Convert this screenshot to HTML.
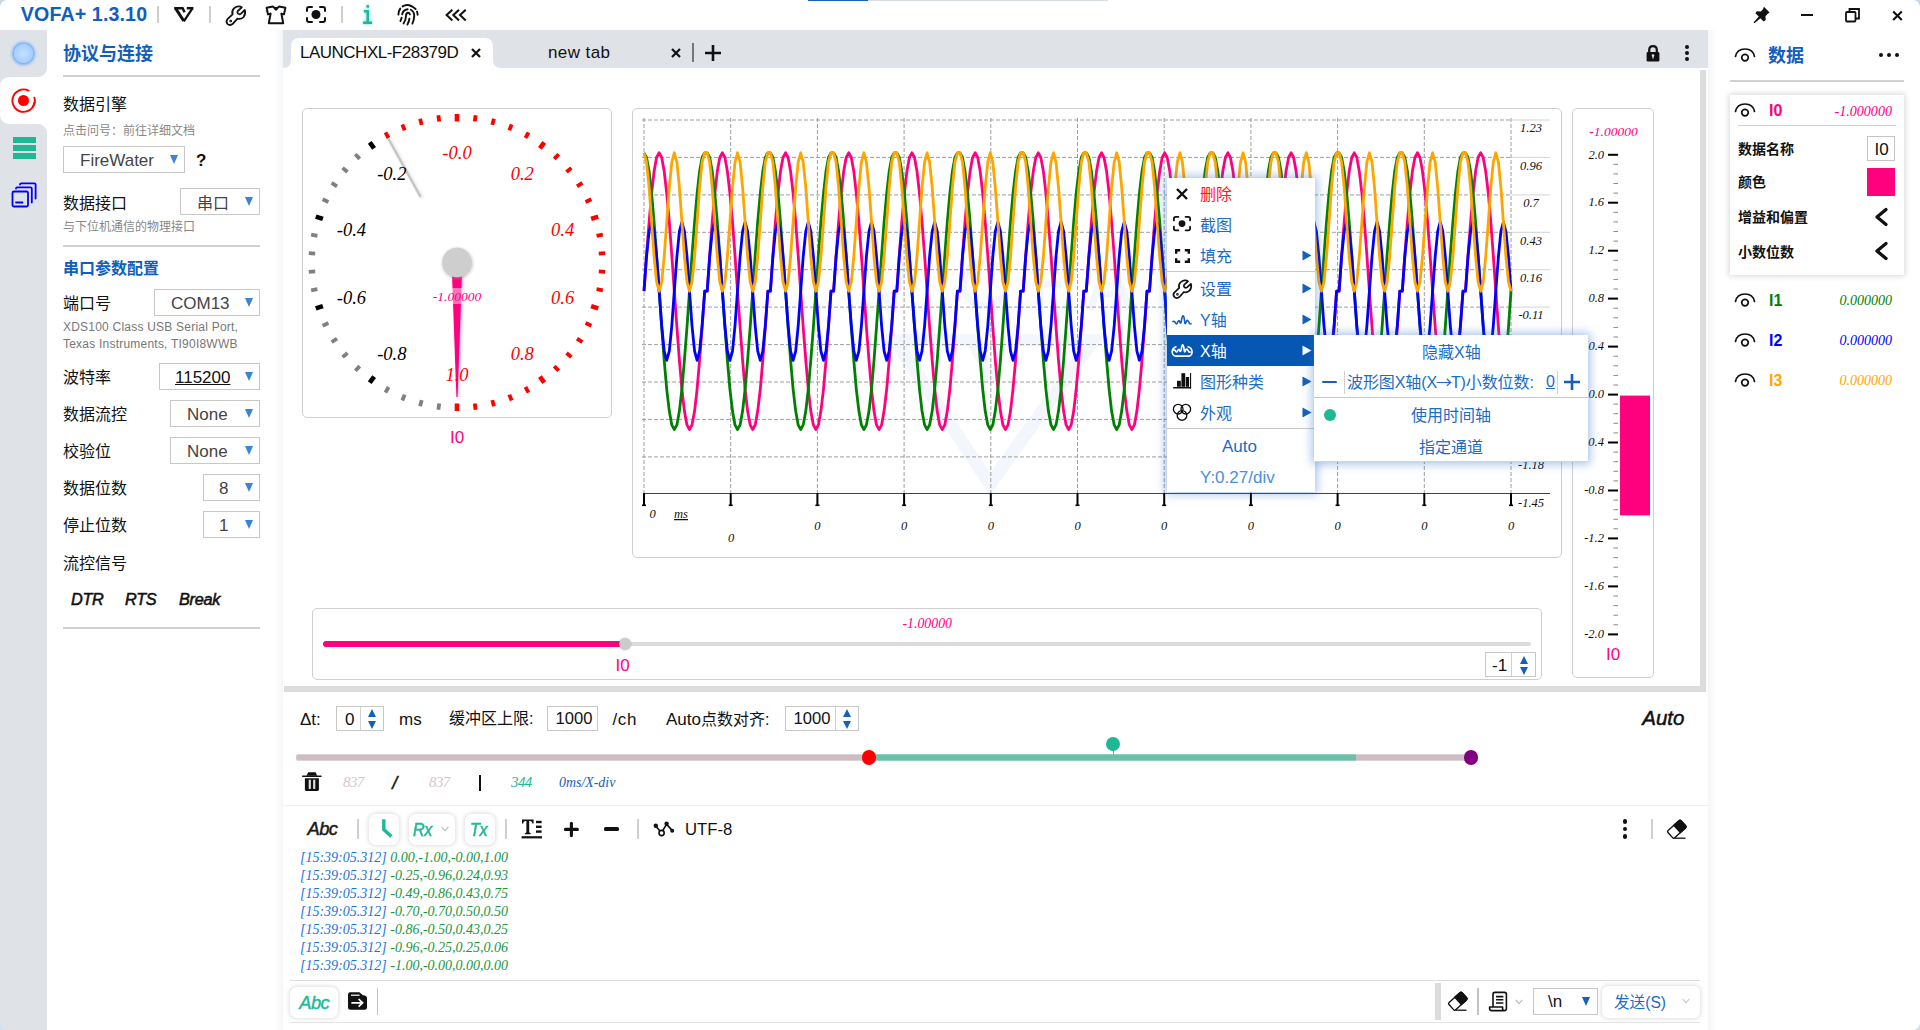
<!DOCTYPE html>
<html lang="zh"><head><meta charset="utf-8"><title>VOFA+ 1.3.10</title>
<style>
html,body{margin:0;padding:0}
body{width:1920px;height:1030px;position:relative;overflow:hidden;background:#fff;font-family:"Liberation Sans","Noto Sans CJK SC",sans-serif;color:#111;font-size:16px}
.a{position:absolute}
.t{position:absolute;white-space:nowrap;line-height:1}
.cj{font-family:"Liberation Sans","Noto Sans CJK SC",sans-serif;margin-top:.118em}
.se{font-family:"Liberation Serif",serif;font-style:italic}
.b{font-weight:bold}
.blue{color:#115ebc}
.sep{position:absolute;width:2px;background:#cfcfcf}
.cb{position:absolute;box-sizing:border-box;border:1px solid #c8c8c8;background:#fff}
.cb .v{position:absolute;white-space:nowrap;line-height:1;color:#444}
.cb .ar{position:absolute;right:6px;top:8px;width:0;height:0;border-left:4.5px solid transparent;border-right:4.5px solid transparent;border-top:9px solid #3a84d8}
.lab{position:absolute;white-space:nowrap;line-height:1;font-size:16px;color:#111;font-family:"Liberation Sans","Noto Sans CJK SC",sans-serif;margin-top:.118em}
.sub{position:absolute;white-space:nowrap;line-height:1;font-size:12px;color:#888;font-family:"Liberation Sans","Noto Sans CJK SC",sans-serif}
.box{position:absolute;box-sizing:border-box;border:1px solid #cfcfcf;border-radius:5px;background:#fff}
svg{position:absolute;overflow:visible}
</style></head><body>
<!-- ===== title bar ===== -->
<div class="a" style="left:0;top:0;width:1920px;height:30px;background:#fff"></div>
<div class="t b blue" style="left:20.8px;top:5px;font-size:19.6px;letter-spacing:0.14px">VOFA+ 1.3.10</div>
<div class="sep" style="left:157px;top:6px;height:17px"></div>
<svg style="left:174px;top:6px" width="20" height="18" viewBox="0 0 20 18" fill="none" stroke="#111" stroke-width="2.5" stroke-linejoin="miter"><path d="M0.2 2.2 H8.6 L10.6 6.2"/><path d="M12.8 2.2 H19.4"/><path d="M1.6 2.4 L9.8 15"  stroke-width="3"/><path d="M9.8 15.4 L18.4 2.4" stroke-width="2.3"/></svg>
<div class="sep" style="left:209px;top:6px;height:17px"></div>
<svg style="left:225px;top:5px" width="22" height="22" viewBox="0 0 22 22" fill="none" stroke="#111" stroke-width="1.8" stroke-linecap="round" stroke-linejoin="round"><path d="M13.2 1.4 Q15.6 1.2 16.8 2.4 L12.8 6 Q11.8 7.4 13 8.6 Q14.6 9.8 16 8.6 L19.8 5 Q21 8.6 18.6 12 Q16 14.8 12.4 13.6 L7.8 18.8 Q5 21.2 2.4 18.8 Q0.6 16.4 2.4 14.2 L7.6 9.4 Q6.4 6 9 3.4 Q10.8 1.6 13.2 1.4 Z"/><circle cx="5.7" cy="16.1" r="0.5"/></svg>
<svg style="left:265px;top:5px" width="22" height="20" viewBox="0 0 22 20" fill="none" stroke="#111" stroke-width="2" stroke-linejoin="round"><path d="M1.6 2.8 L8 1.6 Q11 4.8 14 1.6 L20.4 2.8 L19 9.4 L16.4 8.6 L18.2 18.2 H3.8 L5.6 8.6 L3 9.4 Z"/><path d="M8.2 2 Q11 9.6 13.8 2 Z" fill="#111" stroke="none"/></svg>
<svg style="left:305px;top:5px" width="22" height="20" viewBox="0 0 22 20" fill="none" stroke="#111" stroke-width="2" stroke-linecap="round" stroke-linejoin="round"><path d="M2 6 V4 Q2 2 4 2 H7 M15 2 H18 Q20 2 20 4 V6 M20 13 V15 Q20 17 18 17 H15 M7 17 H4 Q2 17 2 15 V13"/><circle cx="11" cy="9.5" r="4.5" fill="#111" stroke="none"/></svg>
<div class="sep" style="left:341px;top:6px;height:17px"></div>
<div class="t b" style="left:361.5px;top:5px;font-family:'Liberation Mono',monospace;font-size:25px;transform:scaleX(.72);transform-origin:0 0;color:#1abc9c;text-shadow:0 0 4px rgba(26,188,156,.7)">i</div>
<svg style="left:397px;top:3px" width="22" height="23" viewBox="0 0 22 23" fill="none" stroke="#111" stroke-width="1.9" stroke-linecap="round"><path d="M5.6 3.4 Q11.5 -0.4 18.6 6"/><path d="M3.2 5.6 Q1.6 8 1.4 11.6"/><path d="M20 8.6 Q20.6 10 20.6 11.8"/><path d="M5.2 11.4 Q5.6 7 10.6 6.2"/><path d="M13.8 6.8 Q17.6 9 17.2 13.4 Q17 17 15.4 20.6"/><path d="M12.9 11.4 Q12.4 9.6 10.8 9.8 Q9 10.2 9 13 Q8.8 17.6 6.6 20.4"/><path d="M4.6 14.8 Q4.2 16.6 3.4 18"/><path d="M12.4 15.6 Q12 19 10.4 21.6"/></svg>
<svg style="left:445px;top:9px" width="22" height="12" viewBox="0 0 22 12" fill="none" stroke="#111" stroke-width="2" stroke-linecap="square" stroke-linejoin="miter"><path d="M6.6 1.4 L1.6 6.1 L6.6 10.8 M13.3 1.4 L8.3 6.1 L13.3 10.8 M20 1.4 L15 6.1 L20 10.8"/></svg>
<!-- blue tiny bar at top -->
<div class="a" style="left:808px;top:0;width:60px;height:1px;background:#1560bd"></div>
<div class="a" style="left:868px;top:0;width:240px;height:1px;background:#d8dde4"></div>
<!-- window controls -->
<svg style="left:1753px;top:6px" width="18" height="18" viewBox="0 0 18 18"><path d="M10.9 0.8 L16.6 6.6 L14.8 7.8 L12.4 10.2 L12.8 14 L10.6 15.4 L7.4 12.2 L1.4 17.2 L0.5 16.4 L5.8 10.6 L2.4 7.2 L3.8 5.2 L7.8 5.6 L10 3.2 Z" fill="#111"/></svg>
<div class="a" style="left:1801px;top:14px;width:12px;height:2px;background:#111"></div>
<svg style="left:1845px;top:8px" width="15" height="15" viewBox="0 0 15 15" fill="none" stroke="#111" stroke-width="1.8"><rect x="1" y="4" width="9.5" height="9.5" rx="1"/><path d="M4.5 4 V1 H14 V10.5 H10.5"/></svg>
<svg style="left:1892px;top:9.5px" width="11" height="11" viewBox="0 0 11 11" stroke="#111" stroke-width="2.1"><path d="M1.2 1.4 L9.8 10 M9.8 1.4 L1.2 10"/></svg>
<!-- ===== left strip ===== -->
<div class="a" style="left:0;top:30px;width:47px;height:1000px;background:#fff"></div>
<div class="a" style="left:0;top:70px;width:12px;height:62px;background:#dfe3e8"></div>
<div class="a" style="left:0;top:30px;width:47px;height:47px;background:#dfe3e8;border-bottom-right-radius:9px"></div>
<div class="a" style="left:0;top:77px;width:47px;height:47px;background:#fff;border-radius:9px 0 0 9px"></div>
<div class="a" style="left:0;top:124px;width:47px;height:906px;background:#dfe3e8;border-top-right-radius:9px"></div>
<div class="a" style="left:14px;top:43.5px;width:19px;height:19px;border-radius:50%;background:radial-gradient(circle,#c6e0ff 0%,#a9d0ff 60%,#93c4ff 100%);box-shadow:0 0 3.5px 1.5px #4f9fff"></div>
<svg style="left:10px;top:87px" width="28" height="28" viewBox="0 0 28 28" fill="none" stroke="#ff0000" stroke-width="1.9" stroke-linecap="round"><circle cx="13.5" cy="13.5" r="5.5" fill="#ff0000" stroke="none"/><path d="M18.6 3.6 A11.2 11.2 0 1 0 24.4 10.6"/><path d="M24.6 15.2 A11.2 11.2 0 0 1 22.6 20"/></svg>
<div class="a" style="left:13px;top:137px;width:22.5px;height:6px;background:#1fb894"></div>
<div class="a" style="left:13px;top:145px;width:22.5px;height:6px;background:#1fb894"></div>
<div class="a" style="left:13px;top:153px;width:22.5px;height:6px;background:#1fb894"></div>
<svg style="left:11px;top:182px" width="26" height="26" viewBox="0 0 26 26" fill="none" stroke="#0000ff" stroke-width="1.8" stroke-linejoin="round" stroke-linecap="round"><rect x="1.5" y="9.5" width="15.5" height="15" rx="1.5"/><path d="M5 20.5 H11.5"/><path d="M5 6.6 Q5 5.4 6.2 5.4 H19.6 Q20.8 5.4 20.8 6.6 V20.6"/><path d="M9 2.6 Q9 1.4 10.2 1.4 H23.4 Q24.6 1.4 24.6 2.6 V16.6"/></svg>
<!-- ===== left panel ===== -->
<div class="a" style="left:275px;top:30px;width:8px;height:1000px;background:linear-gradient(90deg,#fff,#f9fafb 60%,#f4f5f7)"></div>
<div class="t cj b blue" style="left:63px;top:43px;font-size:18px">协议与连接</div>
<div class="a" style="left:63px;top:75px;width:197px;height:2px;background:#d0d0d0"></div>
<div class="lab" style="left:63px;top:95.1px">数据引擎</div>
<div class="sub" style="left:63px;top:125px">点击问号：前往详细文档</div>
<div class="cb" style="left:63px;top:146px;width:122px;height:27px"><span class="v" style="left:16px;top:5px;font-size:17px">FireWater</span><i class="ar"></i></div>
<div class="t b" style="left:196px;top:152px;font-size:17px">?</div>
<div class="lab" style="left:63px;top:194.1px">数据接口</div>
<div class="cb" style="left:180px;top:188px;width:80px;height:27px"><span class="v cj" style="left:16px;top:5px;font-size:16px">串口</span><i class="ar"></i></div>
<div class="sub" style="left:63px;top:221px">与下位机通信的物理接口</div>
<div class="a" style="left:63px;top:245px;width:197px;height:2px;background:#d0d0d0"></div>
<div class="t cj b blue" style="left:63px;top:259.2px;font-size:16px">串口参数配置</div>
<div class="lab" style="left:63px;top:294.1px">端口号</div>
<div class="cb" style="left:154px;top:289px;width:106px;height:27px"><span class="v" style="left:16px;top:5px;font-size:17px">COM13</span><i class="ar"></i></div>
<div class="sub" style="left:63px;top:321px;color:#777;letter-spacing:.22px">XDS100 Class USB Serial Port,</div>
<div class="sub" style="left:63px;top:338px;color:#777;letter-spacing:.22px">Texas Instruments, TI90I8WWB</div>
<div class="lab" style="left:63px;top:368.1px">波特率</div>
<div class="cb" style="left:159px;top:363px;width:101px;height:27px"><span class="v" style="left:15px;top:5px;font-size:17px;color:#111;text-decoration:underline">115200</span><i class="ar"></i></div>
<div class="lab" style="left:63px;top:405.1px">数据流控</div>
<div class="cb" style="left:170px;top:400px;width:90px;height:27px"><span class="v" style="left:16px;top:5px;font-size:17px">None</span><i class="ar"></i></div>
<div class="lab" style="left:63px;top:442.1px">校验位</div>
<div class="cb" style="left:170px;top:437px;width:90px;height:27px"><span class="v" style="left:16px;top:5px;font-size:17px">None</span><i class="ar"></i></div>
<div class="lab" style="left:63px;top:479.1px">数据位数</div>
<div class="cb" style="left:203px;top:474px;width:57px;height:27px"><span class="v" style="left:15px;top:5px;font-size:17px">8</span><i class="ar"></i></div>
<div class="lab" style="left:63px;top:516.1px">停止位数</div>
<div class="cb" style="left:203px;top:511px;width:57px;height:27px"><span class="v" style="left:15px;top:5px;font-size:17px">1</span><i class="ar"></i></div>
<div class="lab" style="left:63px;top:554.1px">流控信号</div>
<div class="t" style="left:71px;top:590.5px;font-size:16.3px;font-style:italic;letter-spacing:-.3px;-webkit-text-stroke:.55px #111">DTR</div>
<div class="t" style="left:125px;top:590.5px;font-size:16.3px;font-style:italic;letter-spacing:-.3px;-webkit-text-stroke:.55px #111">RTS</div>
<div class="t" style="left:179px;top:590.5px;font-size:16.3px;font-style:italic;letter-spacing:-.3px;-webkit-text-stroke:.55px #111">Break</div>
<div class="a" style="left:63px;top:627px;width:197px;height:2px;background:#d0d0d0"></div>
<!-- ===== tab bar ===== -->
<div class="a" style="left:283px;top:30px;width:1425px;height:38px;background:#dfe3e8"></div>
<div class="a" style="left:291px;top:38px;width:202px;height:30px;background:#fff;border-radius:8px 8px 0 0"></div>
<svg style="left:283px;top:60px" width="8" height="8"><path d="M8 0 V8 H0 Q8 8 8 0Z" fill="#fff"/></svg>
<svg style="left:493px;top:60px" width="8" height="8"><path d="M0 0 V8 H8 Q0 8 0 0Z" fill="#fff"/></svg>
<div class="t" style="left:300px;top:44px;font-size:17px;letter-spacing:-.5px;color:#111" id="tab1">LAUNCHXL-F28379D</div>
<svg style="left:471px;top:48px" width="10" height="10" viewBox="0 0 10 10" stroke="#111" stroke-width="2.2"><path d="M1 1 L9 9 M9 1 L1 9"/></svg>
<div class="t" style="left:548px;top:44px;font-size:17px;letter-spacing:.4px;color:#111" id="tab2">new tab</div>
<svg style="left:671px;top:48px" width="10" height="10" viewBox="0 0 10 10" stroke="#111" stroke-width="2.2"><path d="M1 1 L9 9 M9 1 L1 9"/></svg>
<div class="a" style="left:692px;top:43px;width:1.5px;height:19px;background:#777"></div>
<svg style="left:705px;top:45px" width="16" height="16" viewBox="0 0 16 16" stroke="#111" stroke-width="2.6"><path d="M8 0 V16 M0 8 H16"/></svg>
<svg style="left:1646px;top:44.7px" width="14" height="17" viewBox="0 0 14 17"><path d="M3.2 7.5 V5 Q3.2 1.2 7 1.2 Q10.8 1.2 10.8 5 V7.5" fill="none" stroke="#111" stroke-width="2.2"/><rect x="0.6" y="7" width="12.8" height="9.6" rx="1.4" fill="#111"/><circle cx="7" cy="10.6" r="1.3" fill="#dfe3e8"/><rect x="6.4" y="10.8" width="1.2" height="2.8" fill="#dfe3e8"/></svg>
<div class="a" style="left:1684.5px;top:44.7px;width:4.4px;height:4.4px;border-radius:50%;background:#111"></div>
<div class="a" style="left:1684.5px;top:50.7px;width:4.4px;height:4.4px;border-radius:50%;background:#111"></div>
<div class="a" style="left:1684.5px;top:56.7px;width:4.4px;height:4.4px;border-radius:50%;background:#111"></div>
<!-- scrollbars -->
<div class="a" style="left:1700px;top:70px;width:6px;height:620px;background:#dcdcdc"></div>
<div class="a" style="left:284px;top:686px;width:1422px;height:6px;background:#dcdcdc"></div>
<div class="a" style="left:1708px;top:30px;width:8px;height:1000px;background:linear-gradient(90deg,#f5f6f7,#fafafb 50%,#fff)"></div>
<!-- ===== gauge ===== -->
<div class="box" style="left:302px;top:108px;width:310px;height:310px"></div>
<svg style="left:0;top:0" width="1920" height="1030" viewBox="0 0 1920 1030"><defs><filter id="sh" x="-50%" y="-50%" width="200%" height="200%"><feGaussianBlur stdDeviation="1.6"/></filter></defs><rect x="454.70" y="114.00" width="4.6" height="7.5" fill="#ff0000" transform="rotate(0.0 457.0 262.5)"/><rect x="455.10" y="114.00" width="3.8" height="6.4" fill="#ff0000" transform="rotate(7.2 457.0 262.5)"/><rect x="455.10" y="114.00" width="3.8" height="6.4" fill="#ff0000" transform="rotate(14.4 457.0 262.5)"/><rect x="455.10" y="114.00" width="3.8" height="6.4" fill="#ff0000" transform="rotate(21.6 457.0 262.5)"/><rect x="455.10" y="114.00" width="3.8" height="6.4" fill="#ff0000" transform="rotate(28.8 457.0 262.5)"/><rect x="454.70" y="114.00" width="4.6" height="7.5" fill="#ff0000" transform="rotate(36.0 457.0 262.5)"/><rect x="455.10" y="114.00" width="3.8" height="6.4" fill="#ff0000" transform="rotate(43.2 457.0 262.5)"/><rect x="455.10" y="114.00" width="3.8" height="6.4" fill="#ff0000" transform="rotate(50.4 457.0 262.5)"/><rect x="455.10" y="114.00" width="3.8" height="6.4" fill="#ff0000" transform="rotate(57.6 457.0 262.5)"/><rect x="455.10" y="114.00" width="3.8" height="6.4" fill="#ff0000" transform="rotate(64.8 457.0 262.5)"/><rect x="454.70" y="114.00" width="4.6" height="7.5" fill="#ff0000" transform="rotate(72.0 457.0 262.5)"/><rect x="455.10" y="114.00" width="3.8" height="6.4" fill="#ff0000" transform="rotate(79.2 457.0 262.5)"/><rect x="455.10" y="114.00" width="3.8" height="6.4" fill="#ff0000" transform="rotate(86.4 457.0 262.5)"/><rect x="455.10" y="114.00" width="3.8" height="6.4" fill="#ff0000" transform="rotate(93.6 457.0 262.5)"/><rect x="455.10" y="114.00" width="3.8" height="6.4" fill="#ff0000" transform="rotate(100.8 457.0 262.5)"/><rect x="454.70" y="114.00" width="4.6" height="7.5" fill="#ff0000" transform="rotate(108.0 457.0 262.5)"/><rect x="455.10" y="114.00" width="3.8" height="6.4" fill="#ff0000" transform="rotate(115.2 457.0 262.5)"/><rect x="455.10" y="114.00" width="3.8" height="6.4" fill="#ff0000" transform="rotate(122.4 457.0 262.5)"/><rect x="455.10" y="114.00" width="3.8" height="6.4" fill="#ff0000" transform="rotate(129.6 457.0 262.5)"/><rect x="455.10" y="114.00" width="3.8" height="6.4" fill="#ff0000" transform="rotate(136.8 457.0 262.5)"/><rect x="454.70" y="114.00" width="4.6" height="7.5" fill="#ff0000" transform="rotate(144.0 457.0 262.5)"/><rect x="455.10" y="114.00" width="3.8" height="6.4" fill="#ff0000" transform="rotate(151.2 457.0 262.5)"/><rect x="455.10" y="114.00" width="3.8" height="6.4" fill="#ff0000" transform="rotate(158.4 457.0 262.5)"/><rect x="455.10" y="114.00" width="3.8" height="6.4" fill="#ff0000" transform="rotate(165.6 457.0 262.5)"/><rect x="455.10" y="114.00" width="3.8" height="6.4" fill="#ff0000" transform="rotate(172.8 457.0 262.5)"/><rect x="454.70" y="114.00" width="4.6" height="7.5" fill="#ff0000" transform="rotate(180.0 457.0 262.5)"/><rect x="455.10" y="114.00" width="3.8" height="6.4" fill="#808080" transform="rotate(187.2 457.0 262.5)"/><rect x="455.10" y="114.00" width="3.8" height="6.4" fill="#808080" transform="rotate(194.4 457.0 262.5)"/><rect x="455.10" y="114.00" width="3.8" height="6.4" fill="#808080" transform="rotate(201.6 457.0 262.5)"/><rect x="455.10" y="114.00" width="3.8" height="6.4" fill="#808080" transform="rotate(208.8 457.0 262.5)"/><rect x="454.70" y="114.00" width="4.6" height="7.5" fill="#000" transform="rotate(216.0 457.0 262.5)"/><rect x="455.10" y="114.00" width="3.8" height="6.4" fill="#808080" transform="rotate(223.2 457.0 262.5)"/><rect x="455.10" y="114.00" width="3.8" height="6.4" fill="#808080" transform="rotate(230.4 457.0 262.5)"/><rect x="455.10" y="114.00" width="3.8" height="6.4" fill="#808080" transform="rotate(237.6 457.0 262.5)"/><rect x="455.10" y="114.00" width="3.8" height="6.4" fill="#808080" transform="rotate(244.8 457.0 262.5)"/><rect x="454.70" y="114.00" width="4.6" height="7.5" fill="#000" transform="rotate(252.0 457.0 262.5)"/><rect x="455.10" y="114.00" width="3.8" height="6.4" fill="#808080" transform="rotate(259.2 457.0 262.5)"/><rect x="455.10" y="114.00" width="3.8" height="6.4" fill="#808080" transform="rotate(266.4 457.0 262.5)"/><rect x="455.10" y="114.00" width="3.8" height="6.4" fill="#808080" transform="rotate(273.6 457.0 262.5)"/><rect x="455.10" y="114.00" width="3.8" height="6.4" fill="#808080" transform="rotate(280.8 457.0 262.5)"/><rect x="454.70" y="114.00" width="4.6" height="7.5" fill="#000" transform="rotate(288.0 457.0 262.5)"/><rect x="455.10" y="114.00" width="3.8" height="6.4" fill="#808080" transform="rotate(295.2 457.0 262.5)"/><rect x="455.10" y="114.00" width="3.8" height="6.4" fill="#808080" transform="rotate(302.4 457.0 262.5)"/><rect x="455.10" y="114.00" width="3.8" height="6.4" fill="#808080" transform="rotate(309.6 457.0 262.5)"/><rect x="455.10" y="114.00" width="3.8" height="6.4" fill="#808080" transform="rotate(316.8 457.0 262.5)"/><rect x="454.70" y="114.00" width="4.6" height="7.5" fill="#000" transform="rotate(324.0 457.0 262.5)"/><rect x="455.10" y="114.00" width="3.8" height="6.4" fill="#ff0000" transform="rotate(331.2 457.0 262.5)"/><rect x="455.10" y="114.00" width="3.8" height="6.4" fill="#ff0000" transform="rotate(338.4 457.0 262.5)"/><rect x="455.10" y="114.00" width="3.8" height="6.4" fill="#ff0000" transform="rotate(345.6 457.0 262.5)"/><rect x="455.10" y="114.00" width="3.8" height="6.4" fill="#ff0000" transform="rotate(352.8 457.0 262.5)"/><line x1="422.1" y1="198.4" x2="389.9" y2="140.2" stroke="#999" stroke-width="2.5" opacity=".35" filter="url(#sh)"/><line x1="420.6" y1="196.9" x2="388.4" y2="138.7" stroke="#c4c4c4" stroke-width="2.2"/><polygon points="451.6,262.5 462.4,262.5 457.6,397 456.4,397" fill="#ff007f" opacity=".35" filter="url(#sh)" transform="translate(1.2,1)"/><polygon points="451.6,262.5 462.4,262.5 457.6,397 456.4,397" fill="#ff007f"/><circle cx="457.5" cy="263.5" r="15.5" fill="#999" opacity=".45" filter="url(#sh)"/><circle cx="457.0" cy="262.5" r="14.8" fill="#cecece"/><rect x="451.0" y="288" width="12" height="16" fill="#fff" opacity=".45"/><text x="457.0" y="159.1" text-anchor="middle" font-family="Liberation Serif,serif" font-style="italic" font-size="18.5" fill="#ff0000">-0.0</text><text x="522.2" y="180.3" text-anchor="middle" font-family="Liberation Serif,serif" font-style="italic" font-size="18.5" fill="#ff0000">0.2</text><text x="562.6" y="235.8" text-anchor="middle" font-family="Liberation Serif,serif" font-style="italic" font-size="18.5" fill="#ff0000">0.4</text><text x="562.6" y="304.4" text-anchor="middle" font-family="Liberation Serif,serif" font-style="italic" font-size="18.5" fill="#ff0000">0.6</text><text x="522.2" y="359.9" text-anchor="middle" font-family="Liberation Serif,serif" font-style="italic" font-size="18.5" fill="#ff0000">0.8</text><text x="457.0" y="381.1" text-anchor="middle" font-family="Liberation Serif,serif" font-style="italic" font-size="18.5" fill="#ff0000">1.0</text><text x="391.8" y="359.9" text-anchor="middle" font-family="Liberation Serif,serif" font-style="italic" font-size="18.5" fill="#000">-0.8</text><text x="351.4" y="304.4" text-anchor="middle" font-family="Liberation Serif,serif" font-style="italic" font-size="18.5" fill="#000">-0.6</text><text x="351.4" y="235.8" text-anchor="middle" font-family="Liberation Serif,serif" font-style="italic" font-size="18.5" fill="#000">-0.4</text><text x="391.8" y="180.3" text-anchor="middle" font-family="Liberation Serif,serif" font-style="italic" font-size="18.5" fill="#000">-0.2</text><text x="457.0" y="300.5" text-anchor="middle" font-family="Liberation Serif,serif" font-style="italic" font-size="13.5" fill="#ff007f">-1.00000</text></svg>
<div class="t" style="left:450px;top:428.5px;font-size:17px;color:#ff007f" id="g_i0">I0</div>
<!-- ===== chart ===== -->
<div class="box" style="left:632px;top:108px;width:930px;height:450px"></div>
<svg style="left:0;top:0" width="1920" height="1030" viewBox="0 0 1920 1030"><g fill="none" stroke="#f3f6fc" stroke-width="12" stroke-linejoin="miter"><path d="M886 340 H972 L994 382"/><path d="M1016 340 H1102"/><path d="M896 342 L990 484 L1092 342" stroke-width="13"/></g><g fill="none" stroke="#f3f6fc" stroke-width="7"><circle cx="985" cy="284" r="22"/><path d="M872 258 L890 310 L908 258"/><path d="M1040 310 V260 H1068 M1040 284 H1062"/><path d="M1090 310 L1110 258 L1130 310 M1098 294 H1122"/></g> <line x1="642.0" y1="120.0" x2="1511.0" y2="120.0" stroke="#9e9e9e" stroke-width="1" stroke-dasharray="4 2"/><line x1="1511.0" y1="120.0" x2="1550" y2="120.0" stroke="#d4d4d4" stroke-width="1"/> <line x1="642.0" y1="157.4" x2="1511.0" y2="157.4" stroke="#9e9e9e" stroke-width="1" stroke-dasharray="4 2"/><line x1="1511.0" y1="157.4" x2="1550" y2="157.4" stroke="#d4d4d4" stroke-width="1"/> <line x1="642.0" y1="194.9" x2="1511.0" y2="194.9" stroke="#9e9e9e" stroke-width="1" stroke-dasharray="4 2"/><line x1="1511.0" y1="194.9" x2="1550" y2="194.9" stroke="#d4d4d4" stroke-width="1"/> <line x1="642.0" y1="232.3" x2="1511.0" y2="232.3" stroke="#9e9e9e" stroke-width="1" stroke-dasharray="4 2"/><line x1="1511.0" y1="232.3" x2="1550" y2="232.3" stroke="#d4d4d4" stroke-width="1"/> <line x1="642.0" y1="269.7" x2="1511.0" y2="269.7" stroke="#9e9e9e" stroke-width="1" stroke-dasharray="4 2"/><line x1="1511.0" y1="269.7" x2="1550" y2="269.7" stroke="#d4d4d4" stroke-width="1"/> <line x1="642.0" y1="307.1" x2="1511.0" y2="307.1" stroke="#9e9e9e" stroke-width="1" stroke-dasharray="4 2"/><line x1="1511.0" y1="307.1" x2="1550" y2="307.1" stroke="#d4d4d4" stroke-width="1"/> <line x1="642.0" y1="344.6" x2="1511.0" y2="344.6" stroke="#9e9e9e" stroke-width="1" stroke-dasharray="4 2"/><line x1="1511.0" y1="344.6" x2="1550" y2="344.6" stroke="#d4d4d4" stroke-width="1"/> <line x1="642.0" y1="382.0" x2="1511.0" y2="382.0" stroke="#9e9e9e" stroke-width="1" stroke-dasharray="4 2"/><line x1="1511.0" y1="382.0" x2="1550" y2="382.0" stroke="#d4d4d4" stroke-width="1"/> <line x1="642.0" y1="419.4" x2="1511.0" y2="419.4" stroke="#9e9e9e" stroke-width="1" stroke-dasharray="4 2"/><line x1="1511.0" y1="419.4" x2="1550" y2="419.4" stroke="#d4d4d4" stroke-width="1"/> <line x1="642.0" y1="456.9" x2="1511.0" y2="456.9" stroke="#9e9e9e" stroke-width="1" stroke-dasharray="4 2"/><line x1="1511.0" y1="456.9" x2="1550" y2="456.9" stroke="#d4d4d4" stroke-width="1"/><line x1="644.0" y1="118.0" x2="644.0" y2="493" stroke="#9e9e9e" stroke-width="1" stroke-dasharray="4 2"/><line x1="730.7" y1="118.0" x2="730.7" y2="493" stroke="#9e9e9e" stroke-width="1" stroke-dasharray="4 2"/><line x1="817.4" y1="118.0" x2="817.4" y2="493" stroke="#9e9e9e" stroke-width="1" stroke-dasharray="4 2"/><line x1="904.1" y1="118.0" x2="904.1" y2="493" stroke="#9e9e9e" stroke-width="1" stroke-dasharray="4 2"/><line x1="990.8" y1="118.0" x2="990.8" y2="493" stroke="#9e9e9e" stroke-width="1" stroke-dasharray="4 2"/><line x1="1077.5" y1="118.0" x2="1077.5" y2="493" stroke="#9e9e9e" stroke-width="1" stroke-dasharray="4 2"/><line x1="1164.2" y1="118.0" x2="1164.2" y2="493" stroke="#9e9e9e" stroke-width="1" stroke-dasharray="4 2"/><line x1="1250.9" y1="118.0" x2="1250.9" y2="493" stroke="#9e9e9e" stroke-width="1" stroke-dasharray="4 2"/><line x1="1337.6" y1="118.0" x2="1337.6" y2="493" stroke="#9e9e9e" stroke-width="1" stroke-dasharray="4 2"/><line x1="1424.3" y1="118.0" x2="1424.3" y2="493" stroke="#9e9e9e" stroke-width="1" stroke-dasharray="4 2"/><line x1="1511.0" y1="118.0" x2="1511.0" y2="493" stroke="#9e9e9e" stroke-width="1" stroke-dasharray="4 2"/><polyline fill="none" stroke="#ff007f" stroke-width="2.8" stroke-linejoin="round" points="644.0,291.2 646.5,255.4 649.1,222.0 651.6,193.3 654.1,171.3 656.6,157.5 659.2,152.8 661.7,157.5 664.2,171.3 666.7,193.3 669.3,222.0 671.8,255.4 674.3,291.2 676.9,327.0 679.4,360.4 681.9,389.1 684.4,411.1 687.0,424.9 689.5,429.6 692.0,424.9 694.6,411.1 697.1,389.1 699.6,360.4 702.1,327.0 704.7,291.2 707.2,291.2 709.7,255.4 712.2,222.0 714.8,193.3 717.3,171.3 719.8,157.5 722.4,152.8 724.9,157.5 727.4,171.3 729.9,193.3 732.5,222.0 735.0,255.4 737.5,291.2 740.1,327.0 742.6,360.4 745.1,389.1 747.6,411.1 750.2,424.9 752.7,429.6 755.2,424.9 757.7,411.1 760.3,389.1 762.8,360.4 765.3,327.0 767.9,291.2 770.4,291.2 772.9,255.4 775.4,222.0 778.0,193.3 780.5,171.3 783.0,157.5 785.6,152.8 788.1,157.5 790.6,171.3 793.1,193.3 795.7,222.0 798.2,255.4 800.7,291.2 803.2,327.0 805.8,360.4 808.3,389.1 810.8,411.1 813.4,424.9 815.9,429.6 818.4,424.9 820.9,411.1 823.5,389.1 826.0,360.4 828.5,327.0 831.0,291.2 833.6,291.2 836.1,255.4 838.6,222.0 841.2,193.3 843.7,171.3 846.2,157.5 848.7,152.8 851.3,157.5 853.8,171.3 856.3,193.3 858.9,222.0 861.4,255.4 863.9,291.2 866.4,327.0 869.0,360.4 871.5,389.1 874.0,411.1 876.5,424.9 879.1,429.6 881.6,424.9 884.1,411.1 886.7,389.1 889.2,360.4 891.7,327.0 894.2,291.2 896.8,291.2 899.3,255.4 901.8,222.0 904.4,193.3 906.9,171.3 909.4,157.5 911.9,152.8 914.5,157.5 917.0,171.3 919.5,193.3 922.0,222.0 924.6,255.4 927.1,291.2 929.6,327.0 932.2,360.4 934.7,389.1 937.2,411.1 939.7,424.9 942.3,429.6 944.8,424.9 947.3,411.1 949.9,389.1 952.4,360.4 954.9,327.0 957.4,291.2 960.0,291.2 962.5,255.4 965.0,222.0 967.5,193.3 970.1,171.3 972.6,157.5 975.1,152.8 977.7,157.5 980.2,171.3 982.7,193.3 985.2,222.0 987.8,255.4 990.3,291.2 992.8,327.0 995.3,360.4 997.9,389.1 1000.4,411.1 1002.9,424.9 1005.5,429.6 1008.0,424.9 1010.5,411.1 1013.0,389.1 1015.6,360.4 1018.1,327.0 1020.6,291.2 1023.2,291.2 1025.7,255.4 1028.2,222.0 1030.7,193.3 1033.3,171.3 1035.8,157.5 1038.3,152.8 1040.8,157.5 1043.4,171.3 1045.9,193.3 1048.4,222.0 1051.0,255.4 1053.5,291.2 1056.0,327.0 1058.5,360.4 1061.1,389.1 1063.6,411.1 1066.1,424.9 1068.7,429.6 1071.2,424.9 1073.7,411.1 1076.2,389.1 1078.8,360.4 1081.3,327.0 1083.8,291.2 1086.3,291.2 1088.9,255.4 1091.4,222.0 1093.9,193.3 1096.5,171.3 1099.0,157.5 1101.5,152.8 1104.0,157.5 1106.6,171.3 1109.1,193.3 1111.6,222.0 1114.2,255.4 1116.7,291.2 1119.2,327.0 1121.7,360.4 1124.3,389.1 1126.8,411.1 1129.3,424.9 1131.8,429.6 1134.4,424.9 1136.9,411.1 1139.4,389.1 1142.0,360.4 1144.5,327.0 1147.0,291.2 1149.5,291.2 1152.1,255.4 1154.6,222.0 1157.1,193.3 1159.7,171.3 1162.2,157.5 1164.7,152.8 1167.2,157.5 1169.8,171.3 1172.3,193.3 1174.8,222.0 1177.3,255.4 1179.9,291.2 1182.4,327.0 1184.9,360.4 1187.5,389.1 1190.0,411.1 1192.5,424.9 1195.0,429.6 1197.6,424.9 1200.1,411.1 1202.6,389.1 1205.1,360.4 1207.7,327.0 1210.2,291.2 1212.7,291.2 1215.3,255.4 1217.8,222.0 1220.3,193.3 1222.8,171.3 1225.4,157.5 1227.9,152.8 1230.4,157.5 1233.0,171.3 1235.5,193.3 1238.0,222.0 1240.5,255.4 1243.1,291.2 1245.6,327.0 1248.1,360.4 1250.6,389.1 1253.2,411.1 1255.7,424.9 1258.2,429.6 1260.8,424.9 1263.3,411.1 1265.8,389.1 1268.3,360.4 1270.9,327.0 1273.4,291.2 1275.9,291.2 1278.5,255.4 1281.0,222.0 1283.5,193.3 1286.0,171.3 1288.6,157.5 1291.1,152.8 1293.6,157.5 1296.1,171.3 1298.7,193.3 1301.2,222.0 1303.7,255.4 1306.3,291.2 1308.8,327.0 1311.3,360.4 1313.8,389.1 1316.4,411.1 1318.9,424.9 1321.4,429.6 1324.0,424.9 1326.5,411.1 1329.0,389.1 1331.5,360.4 1334.1,327.0 1336.6,291.2 1339.1,291.2 1341.6,255.4 1344.2,222.0 1346.7,193.3 1349.2,171.3 1351.8,157.5 1354.3,152.8 1356.8,157.5 1359.3,171.3 1361.9,193.3 1364.4,222.0 1366.9,255.4 1369.4,291.2 1372.0,327.0 1374.5,360.4 1377.0,389.1 1379.6,411.1 1382.1,424.9 1384.6,429.6 1387.1,424.9 1389.7,411.1 1392.2,389.1 1394.7,360.4 1397.3,327.0 1399.8,291.2 1402.3,291.2 1404.8,255.4 1407.4,222.0 1409.9,193.3 1412.4,171.3 1414.9,157.5 1417.5,152.8 1420.0,157.5 1422.5,171.3 1425.1,193.3 1427.6,222.0 1430.1,255.4 1432.6,291.2 1435.2,327.0 1437.7,360.4 1440.2,389.1 1442.8,411.1 1445.3,424.9 1447.8,429.6 1450.3,424.9 1452.9,411.1 1455.4,389.1 1457.9,360.4 1460.4,327.0 1463.0,291.2 1465.5,291.2 1468.0,255.4 1470.6,222.0 1473.1,193.3 1475.6,171.3 1478.1,157.5 1480.7,152.8 1483.2,157.5 1485.7,171.3 1488.3,193.3 1490.8,222.0 1493.3,255.4 1495.8,291.2 1498.4,327.0 1500.9,360.4 1503.4,389.1 1505.9,411.1 1508.5,424.9 1511.0,429.6"/><polyline fill="none" stroke="#008000" stroke-width="2.8" stroke-linejoin="round" points="644.0,152.8 646.5,157.5 649.1,171.3 651.6,193.3 654.1,222.0 656.6,255.4 659.2,291.2 661.7,327.0 664.2,360.4 666.7,389.1 669.3,411.1 671.8,424.9 674.3,429.6 676.9,424.9 679.4,411.1 681.9,389.1 684.4,360.4 687.0,327.0 689.5,291.2 692.0,255.4 694.6,222.0 697.1,193.3 699.6,171.3 702.1,157.5 704.7,152.8 707.2,152.8 709.7,157.5 712.2,171.3 714.8,193.3 717.3,222.0 719.8,255.4 722.4,291.2 724.9,327.0 727.4,360.4 729.9,389.1 732.5,411.1 735.0,424.9 737.5,429.6 740.1,424.9 742.6,411.1 745.1,389.1 747.6,360.4 750.2,327.0 752.7,291.2 755.2,255.4 757.7,222.0 760.3,193.3 762.8,171.3 765.3,157.5 767.9,152.8 770.4,152.8 772.9,157.5 775.4,171.3 778.0,193.3 780.5,222.0 783.0,255.4 785.6,291.2 788.1,327.0 790.6,360.4 793.1,389.1 795.7,411.1 798.2,424.9 800.7,429.6 803.2,424.9 805.8,411.1 808.3,389.1 810.8,360.4 813.4,327.0 815.9,291.2 818.4,255.4 820.9,222.0 823.5,193.3 826.0,171.3 828.5,157.5 831.0,152.8 833.6,152.8 836.1,157.5 838.6,171.3 841.2,193.3 843.7,222.0 846.2,255.4 848.7,291.2 851.3,327.0 853.8,360.4 856.3,389.1 858.9,411.1 861.4,424.9 863.9,429.6 866.4,424.9 869.0,411.1 871.5,389.1 874.0,360.4 876.5,327.0 879.1,291.2 881.6,255.4 884.1,222.0 886.7,193.3 889.2,171.3 891.7,157.5 894.2,152.8 896.8,152.8 899.3,157.5 901.8,171.3 904.4,193.3 906.9,222.0 909.4,255.4 911.9,291.2 914.5,327.0 917.0,360.4 919.5,389.1 922.0,411.1 924.6,424.9 927.1,429.6 929.6,424.9 932.2,411.1 934.7,389.1 937.2,360.4 939.7,327.0 942.3,291.2 944.8,255.4 947.3,222.0 949.9,193.3 952.4,171.3 954.9,157.5 957.4,152.8 960.0,152.8 962.5,157.5 965.0,171.3 967.5,193.3 970.1,222.0 972.6,255.4 975.1,291.2 977.7,327.0 980.2,360.4 982.7,389.1 985.2,411.1 987.8,424.9 990.3,429.6 992.8,424.9 995.3,411.1 997.9,389.1 1000.4,360.4 1002.9,327.0 1005.5,291.2 1008.0,255.4 1010.5,222.0 1013.0,193.3 1015.6,171.3 1018.1,157.5 1020.6,152.8 1023.2,152.8 1025.7,157.5 1028.2,171.3 1030.7,193.3 1033.3,222.0 1035.8,255.4 1038.3,291.2 1040.8,327.0 1043.4,360.4 1045.9,389.1 1048.4,411.1 1051.0,424.9 1053.5,429.6 1056.0,424.9 1058.5,411.1 1061.1,389.1 1063.6,360.4 1066.1,327.0 1068.7,291.2 1071.2,255.4 1073.7,222.0 1076.2,193.3 1078.8,171.3 1081.3,157.5 1083.8,152.8 1086.3,152.8 1088.9,157.5 1091.4,171.3 1093.9,193.3 1096.5,222.0 1099.0,255.4 1101.5,291.2 1104.0,327.0 1106.6,360.4 1109.1,389.1 1111.6,411.1 1114.2,424.9 1116.7,429.6 1119.2,424.9 1121.7,411.1 1124.3,389.1 1126.8,360.4 1129.3,327.0 1131.8,291.2 1134.4,255.4 1136.9,222.0 1139.4,193.3 1142.0,171.3 1144.5,157.5 1147.0,152.8 1149.5,152.8 1152.1,157.5 1154.6,171.3 1157.1,193.3 1159.7,222.0 1162.2,255.4 1164.7,291.2 1167.2,327.0 1169.8,360.4 1172.3,389.1 1174.8,411.1 1177.3,424.9 1179.9,429.6 1182.4,424.9 1184.9,411.1 1187.5,389.1 1190.0,360.4 1192.5,327.0 1195.0,291.2 1197.6,255.4 1200.1,222.0 1202.6,193.3 1205.1,171.3 1207.7,157.5 1210.2,152.8 1212.7,152.8 1215.3,157.5 1217.8,171.3 1220.3,193.3 1222.8,222.0 1225.4,255.4 1227.9,291.2 1230.4,327.0 1233.0,360.4 1235.5,389.1 1238.0,411.1 1240.5,424.9 1243.1,429.6 1245.6,424.9 1248.1,411.1 1250.6,389.1 1253.2,360.4 1255.7,327.0 1258.2,291.2 1260.8,255.4 1263.3,222.0 1265.8,193.3 1268.3,171.3 1270.9,157.5 1273.4,152.8 1275.9,152.8 1278.5,157.5 1281.0,171.3 1283.5,193.3 1286.0,222.0 1288.6,255.4 1291.1,291.2 1293.6,327.0 1296.1,360.4 1298.7,389.1 1301.2,411.1 1303.7,424.9 1306.3,429.6 1308.8,424.9 1311.3,411.1 1313.8,389.1 1316.4,360.4 1318.9,327.0 1321.4,291.2 1324.0,255.4 1326.5,222.0 1329.0,193.3 1331.5,171.3 1334.1,157.5 1336.6,152.8 1339.1,152.8 1341.6,157.5 1344.2,171.3 1346.7,193.3 1349.2,222.0 1351.8,255.4 1354.3,291.2 1356.8,327.0 1359.3,360.4 1361.9,389.1 1364.4,411.1 1366.9,424.9 1369.4,429.6 1372.0,424.9 1374.5,411.1 1377.0,389.1 1379.6,360.4 1382.1,327.0 1384.6,291.2 1387.1,255.4 1389.7,222.0 1392.2,193.3 1394.7,171.3 1397.3,157.5 1399.8,152.8 1402.3,152.8 1404.8,157.5 1407.4,171.3 1409.9,193.3 1412.4,222.0 1414.9,255.4 1417.5,291.2 1420.0,327.0 1422.5,360.4 1425.1,389.1 1427.6,411.1 1430.1,424.9 1432.6,429.6 1435.2,424.9 1437.7,411.1 1440.2,389.1 1442.8,360.4 1445.3,327.0 1447.8,291.2 1450.3,255.4 1452.9,222.0 1455.4,193.3 1457.9,171.3 1460.4,157.5 1463.0,152.8 1465.5,152.8 1468.0,157.5 1470.6,171.3 1473.1,193.3 1475.6,222.0 1478.1,255.4 1480.7,291.2 1483.2,327.0 1485.7,360.4 1488.3,389.1 1490.8,411.1 1493.3,424.9 1495.8,429.6 1498.4,424.9 1500.9,411.1 1503.4,389.1 1505.9,360.4 1508.5,327.0 1511.0,291.2"/><polyline fill="none" stroke="#0000ff" stroke-width="2.8" stroke-linejoin="round" points="644.0,291.2 646.5,256.6 649.1,231.3 651.6,222.0 654.1,231.3 656.6,256.6 659.2,291.2 661.7,325.8 664.2,351.1 666.7,360.4 669.3,351.1 671.8,325.8 674.3,291.2 676.9,256.6 679.4,231.3 681.9,222.0 684.4,231.3 687.0,256.6 689.5,291.2 692.0,325.8 694.6,351.1 697.1,360.4 699.6,351.1 702.1,325.8 704.7,291.2 707.2,291.2 709.7,256.6 712.2,231.3 714.8,222.0 717.3,231.3 719.8,256.6 722.4,291.2 724.9,325.8 727.4,351.1 729.9,360.4 732.5,351.1 735.0,325.8 737.5,291.2 740.1,256.6 742.6,231.3 745.1,222.0 747.6,231.3 750.2,256.6 752.7,291.2 755.2,325.8 757.7,351.1 760.3,360.4 762.8,351.1 765.3,325.8 767.9,291.2 770.4,291.2 772.9,256.6 775.4,231.3 778.0,222.0 780.5,231.3 783.0,256.6 785.6,291.2 788.1,325.8 790.6,351.1 793.1,360.4 795.7,351.1 798.2,325.8 800.7,291.2 803.2,256.6 805.8,231.3 808.3,222.0 810.8,231.3 813.4,256.6 815.9,291.2 818.4,325.8 820.9,351.1 823.5,360.4 826.0,351.1 828.5,325.8 831.0,291.2 833.6,291.2 836.1,256.6 838.6,231.3 841.2,222.0 843.7,231.3 846.2,256.6 848.7,291.2 851.3,325.8 853.8,351.1 856.3,360.4 858.9,351.1 861.4,325.8 863.9,291.2 866.4,256.6 869.0,231.3 871.5,222.0 874.0,231.3 876.5,256.6 879.1,291.2 881.6,325.8 884.1,351.1 886.7,360.4 889.2,351.1 891.7,325.8 894.2,291.2 896.8,291.2 899.3,256.6 901.8,231.3 904.4,222.0 906.9,231.3 909.4,256.6 911.9,291.2 914.5,325.8 917.0,351.1 919.5,360.4 922.0,351.1 924.6,325.8 927.1,291.2 929.6,256.6 932.2,231.3 934.7,222.0 937.2,231.3 939.7,256.6 942.3,291.2 944.8,325.8 947.3,351.1 949.9,360.4 952.4,351.1 954.9,325.8 957.4,291.2 960.0,291.2 962.5,256.6 965.0,231.3 967.5,222.0 970.1,231.3 972.6,256.6 975.1,291.2 977.7,325.8 980.2,351.1 982.7,360.4 985.2,351.1 987.8,325.8 990.3,291.2 992.8,256.6 995.3,231.3 997.9,222.0 1000.4,231.3 1002.9,256.6 1005.5,291.2 1008.0,325.8 1010.5,351.1 1013.0,360.4 1015.6,351.1 1018.1,325.8 1020.6,291.2 1023.2,291.2 1025.7,256.6 1028.2,231.3 1030.7,222.0 1033.3,231.3 1035.8,256.6 1038.3,291.2 1040.8,325.8 1043.4,351.1 1045.9,360.4 1048.4,351.1 1051.0,325.8 1053.5,291.2 1056.0,256.6 1058.5,231.3 1061.1,222.0 1063.6,231.3 1066.1,256.6 1068.7,291.2 1071.2,325.8 1073.7,351.1 1076.2,360.4 1078.8,351.1 1081.3,325.8 1083.8,291.2 1086.3,291.2 1088.9,256.6 1091.4,231.3 1093.9,222.0 1096.5,231.3 1099.0,256.6 1101.5,291.2 1104.0,325.8 1106.6,351.1 1109.1,360.4 1111.6,351.1 1114.2,325.8 1116.7,291.2 1119.2,256.6 1121.7,231.3 1124.3,222.0 1126.8,231.3 1129.3,256.6 1131.8,291.2 1134.4,325.8 1136.9,351.1 1139.4,360.4 1142.0,351.1 1144.5,325.8 1147.0,291.2 1149.5,291.2 1152.1,256.6 1154.6,231.3 1157.1,222.0 1159.7,231.3 1162.2,256.6 1164.7,291.2 1167.2,325.8 1169.8,351.1 1172.3,360.4 1174.8,351.1 1177.3,325.8 1179.9,291.2 1182.4,256.6 1184.9,231.3 1187.5,222.0 1190.0,231.3 1192.5,256.6 1195.0,291.2 1197.6,325.8 1200.1,351.1 1202.6,360.4 1205.1,351.1 1207.7,325.8 1210.2,291.2 1212.7,291.2 1215.3,256.6 1217.8,231.3 1220.3,222.0 1222.8,231.3 1225.4,256.6 1227.9,291.2 1230.4,325.8 1233.0,351.1 1235.5,360.4 1238.0,351.1 1240.5,325.8 1243.1,291.2 1245.6,256.6 1248.1,231.3 1250.6,222.0 1253.2,231.3 1255.7,256.6 1258.2,291.2 1260.8,325.8 1263.3,351.1 1265.8,360.4 1268.3,351.1 1270.9,325.8 1273.4,291.2 1275.9,291.2 1278.5,256.6 1281.0,231.3 1283.5,222.0 1286.0,231.3 1288.6,256.6 1291.1,291.2 1293.6,325.8 1296.1,351.1 1298.7,360.4 1301.2,351.1 1303.7,325.8 1306.3,291.2 1308.8,256.6 1311.3,231.3 1313.8,222.0 1316.4,231.3 1318.9,256.6 1321.4,291.2 1324.0,325.8 1326.5,351.1 1329.0,360.4 1331.5,351.1 1334.1,325.8 1336.6,291.2 1339.1,291.2 1341.6,256.6 1344.2,231.3 1346.7,222.0 1349.2,231.3 1351.8,256.6 1354.3,291.2 1356.8,325.8 1359.3,351.1 1361.9,360.4 1364.4,351.1 1366.9,325.8 1369.4,291.2 1372.0,256.6 1374.5,231.3 1377.0,222.0 1379.6,231.3 1382.1,256.6 1384.6,291.2 1387.1,325.8 1389.7,351.1 1392.2,360.4 1394.7,351.1 1397.3,325.8 1399.8,291.2 1402.3,291.2 1404.8,256.6 1407.4,231.3 1409.9,222.0 1412.4,231.3 1414.9,256.6 1417.5,291.2 1420.0,325.8 1422.5,351.1 1425.1,360.4 1427.6,351.1 1430.1,325.8 1432.6,291.2 1435.2,256.6 1437.7,231.3 1440.2,222.0 1442.8,231.3 1445.3,256.6 1447.8,291.2 1450.3,325.8 1452.9,351.1 1455.4,360.4 1457.9,351.1 1460.4,325.8 1463.0,291.2 1465.5,291.2 1468.0,256.6 1470.6,231.3 1473.1,222.0 1475.6,231.3 1478.1,256.6 1480.7,291.2 1483.2,325.8 1485.7,351.1 1488.3,360.4 1490.8,351.1 1493.3,325.8 1495.8,291.2 1498.4,256.6 1500.9,231.3 1503.4,222.0 1505.9,231.3 1508.5,256.6 1511.0,291.2"/><polyline fill="none" stroke="#ffa500" stroke-width="2.8" stroke-linejoin="round" points="644.0,152.8 646.5,162.1 649.1,187.4 651.6,222.0 654.1,256.6 656.6,281.9 659.2,291.2 661.7,281.9 664.2,256.6 666.7,222.0 669.3,187.4 671.8,162.1 674.3,152.8 676.9,162.1 679.4,187.4 681.9,222.0 684.4,256.6 687.0,281.9 689.5,291.2 692.0,281.9 694.6,256.6 697.1,222.0 699.6,187.4 702.1,162.1 704.7,152.8 707.2,152.8 709.7,162.1 712.2,187.4 714.8,222.0 717.3,256.6 719.8,281.9 722.4,291.2 724.9,281.9 727.4,256.6 729.9,222.0 732.5,187.4 735.0,162.1 737.5,152.8 740.1,162.1 742.6,187.4 745.1,222.0 747.6,256.6 750.2,281.9 752.7,291.2 755.2,281.9 757.7,256.6 760.3,222.0 762.8,187.4 765.3,162.1 767.9,152.8 770.4,152.8 772.9,162.1 775.4,187.4 778.0,222.0 780.5,256.6 783.0,281.9 785.6,291.2 788.1,281.9 790.6,256.6 793.1,222.0 795.7,187.4 798.2,162.1 800.7,152.8 803.2,162.1 805.8,187.4 808.3,222.0 810.8,256.6 813.4,281.9 815.9,291.2 818.4,281.9 820.9,256.6 823.5,222.0 826.0,187.4 828.5,162.1 831.0,152.8 833.6,152.8 836.1,162.1 838.6,187.4 841.2,222.0 843.7,256.6 846.2,281.9 848.7,291.2 851.3,281.9 853.8,256.6 856.3,222.0 858.9,187.4 861.4,162.1 863.9,152.8 866.4,162.1 869.0,187.4 871.5,222.0 874.0,256.6 876.5,281.9 879.1,291.2 881.6,281.9 884.1,256.6 886.7,222.0 889.2,187.4 891.7,162.1 894.2,152.8 896.8,152.8 899.3,162.1 901.8,187.4 904.4,222.0 906.9,256.6 909.4,281.9 911.9,291.2 914.5,281.9 917.0,256.6 919.5,222.0 922.0,187.4 924.6,162.1 927.1,152.8 929.6,162.1 932.2,187.4 934.7,222.0 937.2,256.6 939.7,281.9 942.3,291.2 944.8,281.9 947.3,256.6 949.9,222.0 952.4,187.4 954.9,162.1 957.4,152.8 960.0,152.8 962.5,162.1 965.0,187.4 967.5,222.0 970.1,256.6 972.6,281.9 975.1,291.2 977.7,281.9 980.2,256.6 982.7,222.0 985.2,187.4 987.8,162.1 990.3,152.8 992.8,162.1 995.3,187.4 997.9,222.0 1000.4,256.6 1002.9,281.9 1005.5,291.2 1008.0,281.9 1010.5,256.6 1013.0,222.0 1015.6,187.4 1018.1,162.1 1020.6,152.8 1023.2,152.8 1025.7,162.1 1028.2,187.4 1030.7,222.0 1033.3,256.6 1035.8,281.9 1038.3,291.2 1040.8,281.9 1043.4,256.6 1045.9,222.0 1048.4,187.4 1051.0,162.1 1053.5,152.8 1056.0,162.1 1058.5,187.4 1061.1,222.0 1063.6,256.6 1066.1,281.9 1068.7,291.2 1071.2,281.9 1073.7,256.6 1076.2,222.0 1078.8,187.4 1081.3,162.1 1083.8,152.8 1086.3,152.8 1088.9,162.1 1091.4,187.4 1093.9,222.0 1096.5,256.6 1099.0,281.9 1101.5,291.2 1104.0,281.9 1106.6,256.6 1109.1,222.0 1111.6,187.4 1114.2,162.1 1116.7,152.8 1119.2,162.1 1121.7,187.4 1124.3,222.0 1126.8,256.6 1129.3,281.9 1131.8,291.2 1134.4,281.9 1136.9,256.6 1139.4,222.0 1142.0,187.4 1144.5,162.1 1147.0,152.8 1149.5,152.8 1152.1,162.1 1154.6,187.4 1157.1,222.0 1159.7,256.6 1162.2,281.9 1164.7,291.2 1167.2,281.9 1169.8,256.6 1172.3,222.0 1174.8,187.4 1177.3,162.1 1179.9,152.8 1182.4,162.1 1184.9,187.4 1187.5,222.0 1190.0,256.6 1192.5,281.9 1195.0,291.2 1197.6,281.9 1200.1,256.6 1202.6,222.0 1205.1,187.4 1207.7,162.1 1210.2,152.8 1212.7,152.8 1215.3,162.1 1217.8,187.4 1220.3,222.0 1222.8,256.6 1225.4,281.9 1227.9,291.2 1230.4,281.9 1233.0,256.6 1235.5,222.0 1238.0,187.4 1240.5,162.1 1243.1,152.8 1245.6,162.1 1248.1,187.4 1250.6,222.0 1253.2,256.6 1255.7,281.9 1258.2,291.2 1260.8,281.9 1263.3,256.6 1265.8,222.0 1268.3,187.4 1270.9,162.1 1273.4,152.8 1275.9,152.8 1278.5,162.1 1281.0,187.4 1283.5,222.0 1286.0,256.6 1288.6,281.9 1291.1,291.2 1293.6,281.9 1296.1,256.6 1298.7,222.0 1301.2,187.4 1303.7,162.1 1306.3,152.8 1308.8,162.1 1311.3,187.4 1313.8,222.0 1316.4,256.6 1318.9,281.9 1321.4,291.2 1324.0,281.9 1326.5,256.6 1329.0,222.0 1331.5,187.4 1334.1,162.1 1336.6,152.8 1339.1,152.8 1341.6,162.1 1344.2,187.4 1346.7,222.0 1349.2,256.6 1351.8,281.9 1354.3,291.2 1356.8,281.9 1359.3,256.6 1361.9,222.0 1364.4,187.4 1366.9,162.1 1369.4,152.8 1372.0,162.1 1374.5,187.4 1377.0,222.0 1379.6,256.6 1382.1,281.9 1384.6,291.2 1387.1,281.9 1389.7,256.6 1392.2,222.0 1394.7,187.4 1397.3,162.1 1399.8,152.8 1402.3,152.8 1404.8,162.1 1407.4,187.4 1409.9,222.0 1412.4,256.6 1414.9,281.9 1417.5,291.2 1420.0,281.9 1422.5,256.6 1425.1,222.0 1427.6,187.4 1430.1,162.1 1432.6,152.8 1435.2,162.1 1437.7,187.4 1440.2,222.0 1442.8,256.6 1445.3,281.9 1447.8,291.2 1450.3,281.9 1452.9,256.6 1455.4,222.0 1457.9,187.4 1460.4,162.1 1463.0,152.8 1465.5,152.8 1468.0,162.1 1470.6,187.4 1473.1,222.0 1475.6,256.6 1478.1,281.9 1480.7,291.2 1483.2,281.9 1485.7,256.6 1488.3,222.0 1490.8,187.4 1493.3,162.1 1495.8,152.8 1498.4,162.1 1500.9,187.4 1503.4,222.0 1505.9,256.6 1508.5,281.9 1511.0,291.2"/><line x1="643.0" y1="493.5" x2="1550" y2="493.5" stroke="#444" stroke-width="1"/><rect x="643.0" y="493" width="2" height="12.5" fill="#000"/><rect x="642.0" y="504.5" width="4" height="1.6" fill="#000"/><rect x="729.7" y="493" width="2" height="12.5" fill="#000"/><rect x="728.7" y="504.5" width="4" height="1.6" fill="#000"/><rect x="816.4" y="493" width="2" height="12.5" fill="#000"/><rect x="815.4" y="504.5" width="4" height="1.6" fill="#000"/><text x="817.4" y="530" text-anchor="middle" font-family="Liberation Serif,serif" font-style="italic" font-size="12.5" fill="#111">0</text><rect x="903.1" y="493" width="2" height="12.5" fill="#000"/><rect x="902.1" y="504.5" width="4" height="1.6" fill="#000"/><text x="904.1" y="530" text-anchor="middle" font-family="Liberation Serif,serif" font-style="italic" font-size="12.5" fill="#111">0</text><rect x="989.8" y="493" width="2" height="12.5" fill="#000"/><rect x="988.8" y="504.5" width="4" height="1.6" fill="#000"/><text x="990.8" y="530" text-anchor="middle" font-family="Liberation Serif,serif" font-style="italic" font-size="12.5" fill="#111">0</text><rect x="1076.5" y="493" width="2" height="12.5" fill="#000"/><rect x="1075.5" y="504.5" width="4" height="1.6" fill="#000"/><text x="1077.5" y="530" text-anchor="middle" font-family="Liberation Serif,serif" font-style="italic" font-size="12.5" fill="#111">0</text><rect x="1163.2" y="493" width="2" height="12.5" fill="#000"/><rect x="1162.2" y="504.5" width="4" height="1.6" fill="#000"/><text x="1164.2" y="530" text-anchor="middle" font-family="Liberation Serif,serif" font-style="italic" font-size="12.5" fill="#111">0</text><rect x="1249.9" y="493" width="2" height="12.5" fill="#000"/><rect x="1248.9" y="504.5" width="4" height="1.6" fill="#000"/><text x="1250.9" y="530" text-anchor="middle" font-family="Liberation Serif,serif" font-style="italic" font-size="12.5" fill="#111">0</text><rect x="1336.6" y="493" width="2" height="12.5" fill="#000"/><rect x="1335.6" y="504.5" width="4" height="1.6" fill="#000"/><text x="1337.6" y="530" text-anchor="middle" font-family="Liberation Serif,serif" font-style="italic" font-size="12.5" fill="#111">0</text><rect x="1423.3" y="493" width="2" height="12.5" fill="#000"/><rect x="1422.3" y="504.5" width="4" height="1.6" fill="#000"/><text x="1424.3" y="530" text-anchor="middle" font-family="Liberation Serif,serif" font-style="italic" font-size="12.5" fill="#111">0</text><rect x="1510.0" y="493" width="2" height="12.5" fill="#000"/><rect x="1509.0" y="504.5" width="4" height="1.6" fill="#000"/><text x="1511.0" y="530" text-anchor="middle" font-family="Liberation Serif,serif" font-style="italic" font-size="12.5" fill="#111">0</text><text x="652.5" y="518" text-anchor="middle" font-family="Liberation Serif,serif" font-style="italic" font-size="12.5" fill="#111">0</text><text x="681" y="518" text-anchor="middle" font-family="Liberation Serif,serif" font-style="italic" font-size="12.5" fill="#111" text-decoration="underline">ms</text><text x="731" y="542" text-anchor="middle" font-family="Liberation Serif,serif" font-style="italic" font-size="12.5" fill="#111">0</text><text x="1531" y="132.3" text-anchor="middle" font-family="Liberation Serif,serif" font-style="italic" font-size="12.5" fill="#111">1.23</text><text x="1531" y="169.7" text-anchor="middle" font-family="Liberation Serif,serif" font-style="italic" font-size="12.5" fill="#111">0.96</text><text x="1531" y="207.2" text-anchor="middle" font-family="Liberation Serif,serif" font-style="italic" font-size="12.5" fill="#111">0.7</text><text x="1531" y="244.6" text-anchor="middle" font-family="Liberation Serif,serif" font-style="italic" font-size="12.5" fill="#111">0.43</text><text x="1531" y="282.0" text-anchor="middle" font-family="Liberation Serif,serif" font-style="italic" font-size="12.5" fill="#111">0.16</text><text x="1531" y="319.4" text-anchor="middle" font-family="Liberation Serif,serif" font-style="italic" font-size="12.5" fill="#111">-0.11</text><text x="1531" y="356.9" text-anchor="middle" font-family="Liberation Serif,serif" font-style="italic" font-size="12.5" fill="#111">-0.38</text><text x="1531" y="394.3" text-anchor="middle" font-family="Liberation Serif,serif" font-style="italic" font-size="12.5" fill="#111">-0.64</text><text x="1531" y="431.7" text-anchor="middle" font-family="Liberation Serif,serif" font-style="italic" font-size="12.5" fill="#111">-0.91</text><text x="1531" y="469.2" text-anchor="middle" font-family="Liberation Serif,serif" font-style="italic" font-size="12.5" fill="#111">-1.18</text><text x="1531" y="506.6" text-anchor="middle" font-family="Liberation Serif,serif" font-style="italic" font-size="12.5" fill="#111">-1.45</text></svg>
<!-- ===== bar ===== -->
<div class="box" style="left:1572px;top:108px;width:82px;height:570px"></div>
<svg style="left:0;top:0" width="1920" height="1030" viewBox="0 0 1920 1030"><text x="1613.5" y="136" text-anchor="middle" font-family="Liberation Serif,serif" font-style="italic" font-size="13.5" fill="#ff007f">-1.00000</text><rect x="1608" y="153.8" width="10" height="2" fill="#000"/><text x="1604" y="158.5" text-anchor="end" font-family="Liberation Serif,serif" font-style="italic" font-size="12.5" fill="#111">2.0</text><rect x="1613.5" y="163.8" width="4.5" height="1" fill="#888"/><rect x="1613.5" y="173.4" width="4.5" height="1" fill="#888"/><rect x="1613.5" y="183.0" width="4.5" height="1" fill="#888"/><rect x="1613.5" y="192.6" width="4.5" height="1" fill="#888"/><rect x="1608" y="201.7" width="10" height="2" fill="#000"/><text x="1604" y="206.4" text-anchor="end" font-family="Liberation Serif,serif" font-style="italic" font-size="12.5" fill="#111">1.6</text><rect x="1613.5" y="211.8" width="4.5" height="1" fill="#888"/><rect x="1613.5" y="221.4" width="4.5" height="1" fill="#888"/><rect x="1613.5" y="231.0" width="4.5" height="1" fill="#888"/><rect x="1613.5" y="240.6" width="4.5" height="1" fill="#888"/><rect x="1608" y="249.7" width="10" height="2" fill="#000"/><text x="1604" y="254.4" text-anchor="end" font-family="Liberation Serif,serif" font-style="italic" font-size="12.5" fill="#111">1.2</text><rect x="1613.5" y="259.8" width="4.5" height="1" fill="#888"/><rect x="1613.5" y="269.4" width="4.5" height="1" fill="#888"/><rect x="1613.5" y="278.9" width="4.5" height="1" fill="#888"/><rect x="1613.5" y="288.5" width="4.5" height="1" fill="#888"/><rect x="1608" y="297.6" width="10" height="2" fill="#000"/><text x="1604" y="302.3" text-anchor="end" font-family="Liberation Serif,serif" font-style="italic" font-size="12.5" fill="#111">0.8</text><rect x="1613.5" y="307.7" width="4.5" height="1" fill="#888"/><rect x="1613.5" y="317.3" width="4.5" height="1" fill="#888"/><rect x="1613.5" y="326.9" width="4.5" height="1" fill="#888"/><rect x="1613.5" y="336.5" width="4.5" height="1" fill="#888"/><rect x="1608" y="345.6" width="10" height="2" fill="#000"/><text x="1604" y="350.3" text-anchor="end" font-family="Liberation Serif,serif" font-style="italic" font-size="12.5" fill="#111">0.4</text><rect x="1613.5" y="355.7" width="4.5" height="1" fill="#888"/><rect x="1613.5" y="365.3" width="4.5" height="1" fill="#888"/><rect x="1613.5" y="374.9" width="4.5" height="1" fill="#888"/><rect x="1613.5" y="384.5" width="4.5" height="1" fill="#888"/><rect x="1608" y="393.6" width="10" height="2" fill="#000"/><text x="1604" y="398.3" text-anchor="end" font-family="Liberation Serif,serif" font-style="italic" font-size="12.5" fill="#111">0.0</text><rect x="1613.5" y="403.6" width="4.5" height="1" fill="#888"/><rect x="1613.5" y="413.2" width="4.5" height="1" fill="#888"/><rect x="1613.5" y="422.8" width="4.5" height="1" fill="#888"/><rect x="1613.5" y="432.4" width="4.5" height="1" fill="#888"/><rect x="1608" y="441.5" width="10" height="2" fill="#000"/><text x="1604" y="446.2" text-anchor="end" font-family="Liberation Serif,serif" font-style="italic" font-size="12.5" fill="#111">-0.4</text><rect x="1613.5" y="451.6" width="4.5" height="1" fill="#888"/><rect x="1613.5" y="461.2" width="4.5" height="1" fill="#888"/><rect x="1613.5" y="470.8" width="4.5" height="1" fill="#888"/><rect x="1613.5" y="480.4" width="4.5" height="1" fill="#888"/><rect x="1608" y="489.5" width="10" height="2" fill="#000"/><text x="1604" y="494.2" text-anchor="end" font-family="Liberation Serif,serif" font-style="italic" font-size="12.5" fill="#111">-0.8</text><rect x="1613.5" y="499.6" width="4.5" height="1" fill="#888"/><rect x="1613.5" y="509.2" width="4.5" height="1" fill="#888"/><rect x="1613.5" y="518.8" width="4.5" height="1" fill="#888"/><rect x="1613.5" y="528.3" width="4.5" height="1" fill="#888"/><rect x="1608" y="537.4" width="10" height="2" fill="#000"/><text x="1604" y="542.1" text-anchor="end" font-family="Liberation Serif,serif" font-style="italic" font-size="12.5" fill="#111">-1.2</text><rect x="1613.5" y="547.5" width="4.5" height="1" fill="#888"/><rect x="1613.5" y="557.1" width="4.5" height="1" fill="#888"/><rect x="1613.5" y="566.7" width="4.5" height="1" fill="#888"/><rect x="1613.5" y="576.3" width="4.5" height="1" fill="#888"/><rect x="1608" y="585.4" width="10" height="2" fill="#000"/><text x="1604" y="590.1" text-anchor="end" font-family="Liberation Serif,serif" font-style="italic" font-size="12.5" fill="#111">-1.6</text><rect x="1613.5" y="595.5" width="4.5" height="1" fill="#888"/><rect x="1613.5" y="605.1" width="4.5" height="1" fill="#888"/><rect x="1613.5" y="614.7" width="4.5" height="1" fill="#888"/><rect x="1613.5" y="624.3" width="4.5" height="1" fill="#888"/><rect x="1608" y="633.4" width="10" height="2" fill="#000"/><text x="1604" y="638.1" text-anchor="end" font-family="Liberation Serif,serif" font-style="italic" font-size="12.5" fill="#111">-2.0</text><rect x="1620" y="395.6" width="30" height="119.8" fill="#ff007f"/></svg>
<div class="t" style="left:1606px;top:646px;font-size:17px;color:#ff007f">I0</div>
<!-- ===== slider ===== -->
<div class="box" style="left:312px;top:608px;width:1230px;height:72px"></div>
<div class="t se" style="left:902.5px;top:617px;font-size:13.8px;color:#ff007f">-1.00000</div>
<div class="a" style="left:323px;top:642px;width:1208px;height:4px;border-radius:2px;background:#dcdcdc"></div>
<div class="a" style="left:323px;top:641px;width:304px;height:6px;border-radius:3px;background:#ff007f"></div>
<div class="a" style="left:619px;top:638px;width:12px;height:12px;border-radius:50%;background:#cbcbcb;box-shadow:0 0 2px rgba(0,0,0,.25)"></div>
<div class="t" style="left:615.5px;top:656.5px;font-size:17px;color:#ff007f">I0</div>
<div class="cb" style="left:1485px;top:652px;width:51px;height:25px"><span class="v" style="left:6px;top:3.5px;font-size:17px;color:#111">-1</span><i class="a" style="left:25px;top:0;width:1px;height:23px;background:#d0d0d0"></i><i class="a" style="left:34px;top:3px;border-left:4.5px solid transparent;border-right:4.5px solid transparent;border-bottom:8px solid #1560bd"></i><i class="a" style="left:34px;top:14px;border-left:4.5px solid transparent;border-right:4.5px solid transparent;border-top:8px solid #1560bd"></i></div>
<!-- ===== right panel ===== -->
<svg style="left:1734px;top:47px" width="22" height="16" viewBox="0 0 22 16" fill="none" stroke="#111" stroke-width="1.7" stroke-linecap="round"><path d="M1.5 9.5 Q3 2 11 2 Q19 2 20.5 9.5"/><circle cx="11" cy="10.6" r="3.3"/></svg>
<div class="t cj b blue" style="left:1768px;top:45px;font-size:18px">数据</div>
<div class="a" style="left:1879px;top:52.5px;width:4.4px;height:4.4px;border-radius:50%;background:#111"></div>
<div class="a" style="left:1887px;top:52.5px;width:4.4px;height:4.4px;border-radius:50%;background:#111"></div>
<div class="a" style="left:1895px;top:52.5px;width:4.4px;height:4.4px;border-radius:50%;background:#111"></div>
<div class="a" style="left:1730px;top:80px;width:174px;height:2px;background:#d0d0d0"></div>
<div class="a" style="left:1730px;top:95px;width:174px;height:180px;background:#fff;box-shadow:0 0 6px 1px rgba(0,0,0,.16)"></div>
<svg style="left:1734px;top:102px" width="22" height="16" viewBox="0 0 22 16" fill="none" stroke="#111" stroke-width="1.7" stroke-linecap="round"><path d="M1.5 9.5 Q3 2 11 2 Q19 2 20.5 9.5"/><circle cx="11" cy="10.6" r="3.3"/></svg>
<div class="t b" style="left:1769px;top:103px;font-size:16px;color:#ff007f">I0</div>
<div class="t se" style="right:28px;top:103.5px;font-size:14.1px;color:#ff007f">-1.000000</div>
<div class="a" style="left:1738px;top:125px;width:158px;height:1px;background:#d0d0d0"></div>
<div class="t cj b" style="margin-top:1px;left:1738px;top:141px;font-size:14px">数据名称</div>
<div class="cb" style="left:1867px;top:136px;width:28px;height:25px;border-color:#c4c4c4"><span class="v" style="left:6.5px;top:4px;font-size:17px;color:#111">I0</span></div>
<div class="t cj b" style="margin-top:1px;left:1738px;top:174px;font-size:14px">颜色</div>
<div class="a" style="left:1867px;top:168px;width:28px;height:28px;background:#ff007f"></div>
<div class="t cj b" style="margin-top:1px;left:1738px;top:208.8px;font-size:14px">增益和偏置</div>
<svg style="left:1875px;top:208px" width="13" height="18" viewBox="0 0 13 18" fill="none" stroke="#111" stroke-width="3.3" stroke-linecap="round" stroke-linejoin="round"><path d="M11 1.5 L2 9 L11 16.5"/></svg>
<div class="t cj b" style="margin-top:1px;left:1738px;top:243.5px;font-size:14px">小数位数</div>
<svg style="left:1875px;top:242px" width="13" height="18" viewBox="0 0 13 18" fill="none" stroke="#111" stroke-width="3.3" stroke-linecap="round" stroke-linejoin="round"><path d="M11 1.5 L2 9 L11 16.5"/></svg>
<svg style="left:1734px;top:292px" width="22" height="16" viewBox="0 0 22 16" fill="none" stroke="#111" stroke-width="1.7" stroke-linecap="round"><path d="M1.5 9.5 Q3 2 11 2 Q19 2 20.5 9.5"/><circle cx="11" cy="10.6" r="3.3"/></svg>
<div class="t b" style="left:1769px;top:293px;font-size:16px;color:#008000">I1</div>
<div class="t se" style="right:28px;top:294.2px;font-size:14px;color:#008000">0.000000</div>
<svg style="left:1734px;top:332px" width="22" height="16" viewBox="0 0 22 16" fill="none" stroke="#111" stroke-width="1.7" stroke-linecap="round"><path d="M1.5 9.5 Q3 2 11 2 Q19 2 20.5 9.5"/><circle cx="11" cy="10.6" r="3.3"/></svg>
<div class="t b" style="left:1769px;top:333px;font-size:16px;color:#0000ff">I2</div>
<div class="t se" style="right:28px;top:334.2px;font-size:14px;color:#0000ff">0.000000</div>
<svg style="left:1734px;top:372px" width="22" height="16" viewBox="0 0 22 16" fill="none" stroke="#111" stroke-width="1.7" stroke-linecap="round"><path d="M1.5 9.5 Q3 2 11 2 Q19 2 20.5 9.5"/><circle cx="11" cy="10.6" r="3.3"/></svg>
<div class="t b" style="left:1769px;top:373px;font-size:16px;color:#ffa500">I3</div>
<div class="t se" style="right:28px;top:374.2px;font-size:14px;color:#ffa500">0.000000</div>
<!-- ===== bottom panel ===== -->
<div class="t" style="left:300px;top:711px;font-size:17px" id="dt">Δt:</div>
<div class="cb" style="left:336px;top:706px;width:48px;height:25px"><span class="v" style="left:8px;top:4.3px;font-size:17px;color:#111">0</span><i class="a" style="left:22.5px;top:0;width:1px;height:23px;background:#d0d0d0"></i><i class="a" style="left:30.5px;top:2px;border-left:4.5px solid transparent;border-right:4.5px solid transparent;border-bottom:8px solid #1560bd"></i><i class="a" style="left:30.5px;top:13.5px;border-left:4.5px solid transparent;border-right:4.5px solid transparent;border-top:8px solid #1560bd"></i></div>
<div class="t" style="left:399px;top:711px;font-size:17px">ms</div>
<div class="t" style="left:449px;top:711px;font-size:16px" id="buf">缓冲区上限:</div>
<div class="cb" style="left:547px;top:706px;width:51px;height:25px"><span class="v" style="left:7.5px;top:4.3px;font-size:16.6px;color:#111">1000</span></div>
<div class="t" style="left:612.5px;top:711px;font-size:17px;letter-spacing:.6px">/ch</div>
<div class="t" style="left:666px;top:711px;font-size:16px" id="autop"><span style="font-size:17px">Auto</span>点数对齐:</div>
<div class="cb" style="left:785px;top:706px;width:74px;height:25px"><span class="v" style="left:7.5px;top:4.3px;font-size:16.6px;color:#111">1000</span><i class="a" style="left:48.5px;top:0;width:1px;height:23px;background:#d0d0d0"></i><i class="a" style="left:57px;top:2px;border-left:4.5px solid transparent;border-right:4.5px solid transparent;border-bottom:8px solid #1560bd"></i><i class="a" style="left:57px;top:13.5px;border-left:4.5px solid transparent;border-right:4.5px solid transparent;border-top:8px solid #1560bd"></i></div>
<div class="t" style="left:1642.3px;top:707.8px;font-size:20.5px;font-style:italic;-webkit-text-stroke:.5px #111" id="autob">Auto</div>
<!-- timeline -->
<div class="a" style="left:296px;top:754px;width:1180px;height:7px;border-radius:3px;background:#cdbdc3;box-shadow:inset 0 1px 0 #ddd2d6,inset 0 -1px 0 #ddd2d6"></div>
<div class="a" style="left:869px;top:754px;width:487px;height:7px;background:#6cbfa9;box-shadow:inset 0 1px 0 #8fd0bf,inset 0 -1px 0 #8fd0bf"></div>
<div class="a" style="left:1112.5px;top:748px;width:1.2px;height:7px;background:#5cc9ae"></div>
<div class="a" style="left:861.7px;top:750.2px;width:14.6px;height:14.6px;border-radius:50%;background:#ff0000"></div>
<div class="a" style="left:1463.7px;top:750.2px;width:14.6px;height:14.6px;border-radius:50%;background:#800080"></div>
<div class="a" style="left:1106px;top:736.8px;width:14px;height:14px;border-radius:50%;background:#1fb894"></div>
<!-- status row -->
<svg style="left:302px;top:772px" width="20" height="20" viewBox="0 0 20 20" fill="#111"><path d="M4.5 3.8 L6.2 0.2 H13.6 L15.2 3.8 Z"/><rect x="0.1" y="3.5" width="19.5" height="1.5" rx="0.6"/><path d="M2.9 6.3 H16.9 V17.4 Q16.9 19.1 15.2 19.1 H4.6 Q2.9 19.1 2.9 17.4 Z"/><rect x="6.7" y="7.7" width="2.2" height="9.2" fill="#ddd"/><rect x="11.1" y="7.7" width="2.2" height="9.2" fill="#ddd"/></svg>
<div class="t se" style="left:343px;top:775.2px;font-size:14.8px;letter-spacing:-.5px;color:#d6c6cd">837</div>
<div class="t" style="left:392.3px;top:774.3px;font-size:18px;font-style:italic;-webkit-text-stroke:.5px #111">/</div>
<div class="t se" style="left:429px;top:775.2px;font-size:14.8px;letter-spacing:-.5px;color:#d6c6cd">837</div>
<div class="a" style="left:479px;top:775px;width:2px;height:16px;background:#111"></div>
<div class="t se" style="left:511px;top:775.2px;font-size:14.8px;letter-spacing:-.5px;color:#1fb894">344</div>
<div class="t se" style="left:559px;top:776px;font-size:13.9px;color:#1560bd">0ms/X-div</div>
<div class="a" style="left:284px;top:805px;width:1424px;height:1px;background:#efefef"></div>
<!-- toolbar row -->
<div class="t" style="left:307.5px;top:820px;font-size:18.3px;font-style:italic;color:#1a1a1a;letter-spacing:-.55px;-webkit-text-stroke:.5px #1a1a1a">Abc</div>
<div class="a" style="left:357px;top:819px;width:2.4px;height:19.5px;background:#cfcfcf"></div>
<div class="a" style="left:369px;top:814px;width:30px;height:31px;border-radius:7px;background:#fff;box-shadow:0 0 4px 1px rgba(0,0,0,.13)"></div>
<svg style="left:380px;top:818px" width="14" height="22" viewBox="0 0 14 22" fill="none" stroke="#1fb894" stroke-width="3.4" stroke-linecap="butt" stroke-linejoin="miter"><path d="M3.8 1.3 V11.4 L11.4 18.4"/></svg>
<div class="a" style="left:409px;top:814px;width:46px;height:31px;border-radius:7px;background:#fff;box-shadow:0 0 4px 1px rgba(0,0,0,.13)"></div>
<div class="t" style="left:413px;top:819.6px;font-size:19px;letter-spacing:-.6px;transform:scaleX(.86);transform-origin:0 0;font-style:italic;color:#1fb894;-webkit-text-stroke:.5px #1fb894">Rx</div>
<svg style="left:441px;top:826px" width="8" height="6" viewBox="0 0 8 6" fill="none" stroke="#bbb" stroke-width="1.2"><path d="M0.6 0.8 L4 4.6 L7.4 0.8"/></svg>
<div class="a" style="left:465px;top:814px;width:30px;height:31px;border-radius:7px;background:#fff;box-shadow:0 0 4px 1px rgba(0,0,0,.13)"></div>
<div class="t" style="left:469.6px;top:819.6px;font-size:19px;letter-spacing:-.6px;transform:scaleX(.86);transform-origin:0 0;font-style:italic;color:#1fb894;-webkit-text-stroke:.5px #1fb894">Tx</div>
<div class="a" style="left:505px;top:819px;width:2.4px;height:19.5px;background:#cfcfcf"></div>
<svg style="left:521px;top:819px" width="22" height="20" viewBox="0 0 22 20" fill="#111"><path d="M1 0.5 H12.6 V4.6 H11.4 Q11.2 2.2 9.4 2 H8.2 V13 Q8.2 14 9.8 14.2 V15.2 H3.8 V14.2 Q5.4 14 5.4 13 V2 H4.2 Q2.4 2.2 2.2 4.6 H1 Z"/><rect x="15" y="1.8" width="5.6" height="2.4"/><rect x="15" y="6.6" width="5.6" height="2.4"/><rect x="15" y="11.4" width="5.6" height="2.4"/><rect x="0.6" y="17.2" width="20.4" height="2.2"/></svg>
<svg style="left:563px;top:821px" width="17" height="17" viewBox="0 0 17 17" stroke="#111" stroke-width="3.1" stroke-linecap="round"><path d="M8.4 2.2 V14.6 M2.4 8.4 H14.4"/></svg>
<div class="a" style="left:604px;top:827.4px;width:15px;height:3.3px;border-radius:1.6px;background:#111"></div>
<div class="a" style="left:637px;top:819px;width:2.4px;height:19.5px;background:#cfcfcf"></div>
<svg style="left:653px;top:821px" width="22" height="16" viewBox="0 0 22 16" fill="none" stroke="#111" stroke-width="1.6"><path d="M2.6 5 L8.4 11.6 L13.6 3.4 L19.4 9.6"/><circle cx="2.8" cy="4.8" r="2.2" fill="#111" stroke="none"/><circle cx="8.6" cy="12" r="2.6" fill="#fff"/><circle cx="13.6" cy="2.8" r="2.2" fill="#111" stroke="none"/><circle cx="19.2" cy="9.8" r="2" fill="#111" stroke="none"/></svg>
<div class="t" style="left:685px;top:821.5px;font-size:16.7px" id="utf">UTF-8</div>
<div class="a" style="left:1622.6px;top:819px;width:4.6px;height:4.6px;border-radius:50%;background:#111"></div>
<div class="a" style="left:1622.6px;top:826.6px;width:4.6px;height:4.6px;border-radius:50%;background:#111"></div>
<div class="a" style="left:1622.6px;top:834.2px;width:4.6px;height:4.6px;border-radius:50%;background:#111"></div>
<div class="a" style="left:1650.5px;top:819px;width:2.4px;height:19.5px;background:#cfcfcf"></div>
<svg style="left:1665px;top:818px" width="24" height="22" viewBox="0 0 24 22"><g transform="translate(11.8,11.2) rotate(-42)"><rect x="-8.8" y="-4.9" width="17.6" height="9.8" rx="1.5" fill="#fff" stroke="#111" stroke-width="1.4"/><path d="M0.4 -4.9 H7.3 Q8.8 -4.9 8.8 -3.4 V3.4 Q8.8 4.9 7.3 4.9 H0.4 Z" fill="#111" stroke="#111" stroke-width="1.4"/></g><path d="M9.5 20.2 H20.5" stroke="#111" stroke-width="1.3"/></svg>
<!-- log lines -->
<div class="a se" style="left:300px;top:849.3px;font-size:14px;line-height:18px;white-space:pre;color:#1a9641" id="log"><span style="color:#1a73d9">[15:39:05.312]</span> 0.00,-1.00,-0.00,1.00
<span style="color:#1a73d9">[15:39:05.312]</span> -0.25,-0.96,0.24,0.93
<span style="color:#1a73d9">[15:39:05.312]</span> -0.49,-0.86,0.43,0.75
<span style="color:#1a73d9">[15:39:05.312]</span> -0.70,-0.70,0.50,0.50
<span style="color:#1a73d9">[15:39:05.312]</span> -0.86,-0.50,0.43,0.25
<span style="color:#1a73d9">[15:39:05.312]</span> -0.96,-0.25,0.25,0.06
<span style="color:#1a73d9">[15:39:05.312]</span> -1.00,-0.00,0.00,0.00</div>
<!-- input bar -->
<div class="a" style="left:290px;top:980px;width:1410px;height:1px;background:#dcdcdc"></div>
<div class="a" style="left:290px;top:1022px;width:1410px;height:1px;background:#e4e4e4"></div>
<div class="a" style="left:290px;top:987px;width:48px;height:31px;border-radius:7px;background:#fff;box-shadow:0 0 4px 1px rgba(0,0,0,.13)"></div>
<div class="t" style="left:299.3px;top:993.6px;font-size:18.3px;font-style:italic;color:#1fb894;-webkit-text-stroke:.4px #1fb894;letter-spacing:-.6px">Abc</div>
<svg style="left:347px;top:991px" width="21" height="20" viewBox="0 0 21 20"><path d="M1 3.4 Q1 1.2 3.2 1.2 H12.4 L16 4.2 Q20 4.4 20 7 V16.6 Q20 18.8 17.8 18.8 H3.2 Q1 18.8 1 16.6 Z" fill="#111"/><path d="M4 4.2 H12.6" stroke="#fff" stroke-width="1.2"/><path d="M4.4 11.8 H15.4 M11.6 8 L15.6 11.8 L11.6 15.6" fill="none" stroke="#fff" stroke-width="1.7"/></svg>
<div class="a" style="left:376.5px;top:988px;width:1.5px;height:27px;background:#c4c4c4"></div>
<div class="a" style="left:1435.2px;top:983px;width:5.6px;height:37px;background:#dcdcdc"></div>
<svg style="left:1446px;top:990px" width="24" height="22" viewBox="0 0 24 22"><g transform="translate(11.8,11.2) rotate(-42)"><rect x="-8.8" y="-4.9" width="17.6" height="9.8" rx="1.5" fill="#fff" stroke="#111" stroke-width="1.4"/><path d="M0.4 -4.9 H7.3 Q8.8 -4.9 8.8 -3.4 V3.4 Q8.8 4.9 7.3 4.9 H0.4 Z" fill="#111" stroke="#111" stroke-width="1.4"/></g><path d="M9.5 20.2 H20.5" stroke="#111" stroke-width="1.3"/></svg>
<div class="a" style="left:1477px;top:988px;width:1.5px;height:27px;background:#c4c4c4"></div>
<svg style="left:1488px;top:991px" width="20" height="21" viewBox="0 0 20 21" fill="none" stroke="#111" stroke-width="1.6" stroke-linejoin="round"><path d="M5 16 V3.4 Q5 1.4 7 1.4 H16.4 Q18.4 1.4 18.4 3.4 V17.6 Q18.4 19.6 16.4 19.6 H3.6 Q1.6 19.6 1.6 17.6 V16 H14.6 V17.8 Q14.8 19.4 16.4 19.6"/><path d="M8 5.6 H15.4 M8 8.8 H15.4 M8 12 H15.4"/></svg>
<svg style="left:1515px;top:999px" width="8" height="6" viewBox="0 0 8 6" fill="none" stroke="#bbb" stroke-width="1.2"><path d="M0.6 0.8 L4 4.6 L7.4 0.8"/></svg>
<div class="cb" style="left:1533px;top:988px;width:65px;height:27px"><span class="v" style="left:14px;top:4px;font-size:17px;color:#111">\n</span><i class="ar" style="border-top-color:#1560bd;right:7px;top:8px"></i></div>
<div class="a" style="left:1602px;top:986px;width:98px;height:32px;border-radius:6px;background:#fff;box-shadow:0 0 4px 1px rgba(0,0,0,.13)"></div>
<div class="t" style="left:1614px;top:995px;font-size:15.6px;color:#1a6cc4" id="send">发送(S)</div>
<svg style="left:1682px;top:998px" width="8" height="6" viewBox="0 0 8 6" fill="none" stroke="#ccc" stroke-width="1.2"><path d="M0.6 0.8 L4 4.6 L7.4 0.8"/></svg>
<!-- window corners -->
<svg style="left:0;top:0" width="8" height="8"><path d="M0 0 H7.5 A7.5 7.5 0 0 0 0 7.5 Z" fill="#cdd9e6"/></svg>
<svg style="left:1912px;top:0" width="8" height="8"><path d="M8 0 H0.5 A7.5 7.5 0 0 1 8 7.5 Z" fill="#cdd9e6"/></svg>
<svg style="left:0;top:1022px" width="8" height="8"><path d="M0 8 H7.5 A7.5 7.5 0 0 1 0 0.5 Z" fill="#d3dfec"/></svg>
<svg style="left:1912px;top:1022px" width="8" height="8"><path d="M8 8 H0.5 A7.5 7.5 0 0 0 8 0.5 Z" fill="#d3dfec"/></svg>
<!-- ===== context menu ===== -->
<div class="a" id="menu" style="left:1167px;top:178px;width:148px;height:314px;background:#fff;box-shadow:0 0 9px 2px rgba(40,110,200,.42);font-family:'Liberation Sans','Noto Sans CJK SC',sans-serif;font-size:16px;color:#1a6cc4">
<div class="a" style="left:0;top:157px;width:148px;height:31px;background:#0557b3"></div>
<div class="a" style="left:0;top:93px;width:148px;height:1px;background:#c8c8c8"></div>
<div class="a" style="left:0;top:250px;width:148px;height:1px;background:#c8c8c8"></div>
<div class="t" style="left:33px;top:8.9px;color:#ff1a1a">删除</div>
<div class="t" style="left:33px;top:39.9px">截图</div>
<div class="t" style="left:33px;top:70.9px">填充</div>
<div class="t" style="left:33px;top:103.9px">设置</div>
<div class="t" style="left:33px;top:134.9px">Y轴</div>
<div class="t" style="left:33px;top:165.9px;color:#fff">X轴</div>
<div class="t" style="left:33px;top:196.9px">图形种类</div>
<div class="t" style="left:33px;top:227.9px">外观</div>
<div class="t" style="left:55px;top:260px;font-size:17px">Auto</div>
<div class="t" style="left:33px;top:291px;font-size:17px;color:#4a90d9">Y:0.27/div</div>
<!-- arrows -->
<svg style="left:135px;top:72px" width="10" height="11"><path d="M0.5 0.5 L9.5 5.5 L0.5 10.5Z" fill="#1560bd"/></svg>
<svg style="left:135px;top:105px" width="10" height="11"><path d="M0.5 0.5 L9.5 5.5 L0.5 10.5Z" fill="#1560bd"/></svg>
<svg style="left:135px;top:136px" width="10" height="11"><path d="M0.5 0.5 L9.5 5.5 L0.5 10.5Z" fill="#1560bd"/></svg>
<svg style="left:135px;top:167px" width="10" height="11"><path d="M0.5 0.5 L9.5 5.5 L0.5 10.5Z" fill="#fff"/></svg>
<svg style="left:135px;top:198px" width="10" height="11"><path d="M0.5 0.5 L9.5 5.5 L0.5 10.5Z" fill="#1560bd"/></svg>
<svg style="left:135px;top:229px" width="10" height="11"><path d="M0.5 0.5 L9.5 5.5 L0.5 10.5Z" fill="#1560bd"/></svg>
<!-- icons -->
<svg style="left:9px;top:10px" width="12" height="12" viewBox="0 0 12 12" stroke="#111" stroke-width="2.4"><path d="M1 1 L11 11 M11 1 L1 11"/></svg>
<svg style="left:5px;top:37px" width="20" height="18" viewBox="0 0 22 20" fill="none" stroke="#111" stroke-width="2" stroke-linecap="round" stroke-linejoin="round"><path d="M2 6 V4 Q2 2 4 2 H7 M15 2 H18 Q20 2 20 4 V6 M20 13 V15 Q20 17 18 17 H15 M7 17 H4 Q2 17 2 15 V13"/><circle cx="11" cy="9.5" r="3.8" fill="#111" stroke="none"/></svg>
<svg style="left:7.5px;top:71px" width="15" height="14" viewBox="0 0 15 14" fill="none" stroke="#111" stroke-width="2.4"><path d="M1.2 4.8 V1.2 H5.2 M9.8 1.2 H13.8 V4.8 M13.8 9.2 V12.8 H9.8 M5.2 12.8 H1.2 V9.2"/></svg>
<svg style="left:4.5px;top:100.5px" width="21" height="21" viewBox="0 0 22 22" fill="none" stroke="#111" stroke-width="1.8" stroke-linecap="round" stroke-linejoin="round"><path d="M13.2 1.4 Q15.6 1.2 16.8 2.4 L12.8 6 Q11.8 7.4 13 8.6 Q14.6 9.8 16 8.6 L19.8 5 Q21 8.6 18.6 12 Q16 14.8 12.4 13.6 L7.8 18.8 Q5 21.2 2.4 18.8 Q0.6 16.4 2.4 14.2 L7.6 9.4 Q6.4 6 9 3.4 Q10.8 1.6 13.2 1.4 Z"/><circle cx="5.7" cy="16.1" r="0.5"/></svg>
<svg style="left:5px;top:135px" width="20" height="14" viewBox="0 0 20 14" fill="none" stroke="#1560bd" stroke-width="1.6" stroke-linecap="round" stroke-linejoin="round"><path d="M1 8.5 Q2.6 8 3.6 10.2 Q4.6 12 5.8 9 Q7 6 7.8 9 Q8.4 11.4 9.2 9 Q10.4 1.5 11.4 3 Q12.2 4 12.8 9.5 Q13.2 12 14 9.5 Q14.8 6.5 15.8 7.6 Q16.8 8.6 17.6 10.6 L19 10.8"/></svg>
<svg style="left:3px;top:161.5px" width="24" height="18" viewBox="0 0 24 19" fill="none" stroke="#fff" stroke-width="1.7" stroke-linecap="round" stroke-linejoin="round"><path d="M3 10.5 Q4.4 10 5.4 12 Q6.4 13.8 7.6 11 Q8.6 8.4 9.6 11 Q10.2 13 11 11 Q12 4 13 5.4 Q13.8 6.4 14.4 11.4 Q14.8 13.8 15.6 11.4 Q16.4 8.8 17.4 9.8 Q18.4 10.8 19.2 12.6 L20.6 12.8"/><path d="M5.6 7.2 Q2 8.6 1.6 12 Q1.4 16 5 17 H19.6 Q23 16 22.6 12 Q22 8 18.4 7.2"/></svg>
<svg style="left:5px;top:194px" width="20" height="18" viewBox="0 0 20 18" fill="#111"><rect x="5" y="8.8" width="3.8" height="6"/><rect x="9.4" y="1.2" width="3.8" height="13.6"/><rect x="13.8" y="5" width="3.3" height="9.8"/><rect x="18" y="1" width="1.1" height="15.4"/><rect x="1.2" y="15" width="17.9" height="1.5"/></svg>
<svg style="left:5px;top:225px" width="20" height="20" viewBox="0 0 20 20" fill="none" stroke="#111" stroke-width="1.35"><circle cx="6.2" cy="6.2" r="4.8"/><circle cx="13.8" cy="6.2" r="4.8"/><circle cx="10" cy="12.4" r="4.8"/></svg>
</div>
<!-- submenu -->
<div class="a" id="submenu" style="left:1314px;top:335px;width:274px;height:127px;background:#fff;box-shadow:0 0 9px 2px rgba(40,110,200,.42);font-family:'Liberation Sans','Noto Sans CJK SC',sans-serif;font-size:16px;color:#1a6cc4">
<div class="a" style="left:0;top:62px;width:274px;height:1px;background:#c8c8c8"></div>
<div class="a" style="left:0;top:126px;width:274px;height:1px;background:#d4d4d4"></div>
<div class="t" style="left:108px;top:9.5px">隐藏X轴</div>
<div class="a" style="left:7.5px;top:45.6px;width:15.5px;height:2.9px;border-radius:1px;background:#1560bd"></div>
<div class="a" style="left:30px;top:36px;width:1px;height:23px;background:#d0d0d0"></div>
<div class="t" style="left:33px;top:39.5px;letter-spacing:-.1px" id="sm2">波形图X轴(X<span style="font-family:'Noto Sans CJK SC',sans-serif;line-height:0;margin:0 -1px">→</span>T)小数位数:</div>
<div class="t" style="left:232px;top:39px;text-decoration:underline">0</div>
<div class="a" style="left:243px;top:36px;width:1px;height:23px;background:#d0d0d0"></div>
<svg style="left:250px;top:39px" width="16" height="16" viewBox="0 0 16 16" stroke="#1560bd" stroke-width="2.6"><path d="M8 0 V16 M0 8 H16"/></svg>
<div class="a" style="left:10px;top:74px;width:12px;height:12px;border-radius:50%;background:#1fb894"></div>
<div class="t" style="left:97px;top:73px">使用时间轴</div>
<div class="t" style="left:105px;top:104.5px">指定通道</div>
</div>
</body></html>
